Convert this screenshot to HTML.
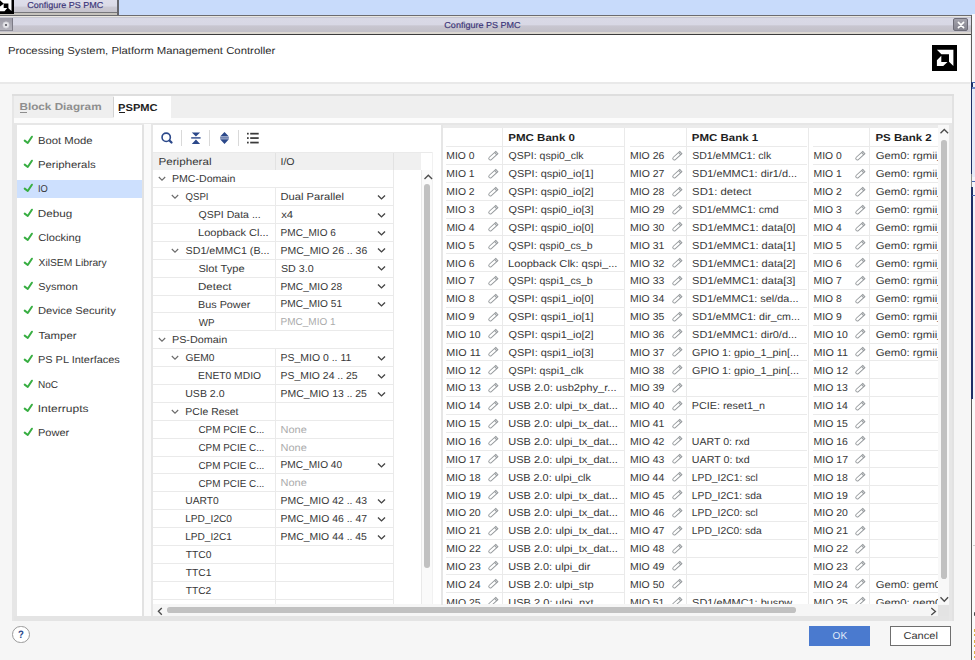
<!DOCTYPE html>
<html><head><meta charset="utf-8"><title>Configure PS PMC</title>
<style>
html,body{margin:0;padding:0;}
body{width:975px;height:660px;overflow:hidden;position:relative;background:#f6f6f6;font-family:"Liberation Sans",sans-serif;}
#r{position:absolute;left:0;top:0;width:975px;height:660px;overflow:hidden;}
#r div,#r svg,#r span{position:absolute;display:block;}
.t{left:0;line-height:20px;white-space:pre;transform-origin:0 0;text-rendering:geometricPrecision;font-family:"Liberation Sans",sans-serif;}
.clip{overflow:hidden;}
</style></head><body><div id="r">
<div style="left:0.00px;top:0.00px;width:975.00px;height:660.00px;background:#f6f6f6;"></div>
<div style="left:0.00px;top:0.00px;width:975.00px;height:14.90px;background:#c8dbfb;"></div>
<div style="left:972.30px;top:14.90px;width:2.70px;height:3.50px;background:#c8dbfb;"></div>
<div style="left:13.00px;top:0.00px;width:104.40px;height:12.10px;background:#dddde9;background:linear-gradient(#dedeea 0,#dadae6 50%,#cbc9d3 60%,#c6c4cc 100%);"></div>
<div style="left:0.00px;top:12.00px;width:117.40px;height:0.95px;background:#77777b;"></div>
<div style="left:0.00px;top:12.90px;width:117.40px;height:2.00px;background:#c6c3bd;"></div>
<div style="left:117.20px;top:0.00px;width:1.40px;height:14.90px;background:#66666c;"></div>
<div style="left:0.00px;top:0.00px;width:13.80px;height:13.50px;background:#000;"></div>
<svg style="left:0.00px;top:0.00px" width="14" height="14" viewBox="0 0 14 14"><path d="M0 0 H11.5 V11.1 L8.4 8.2 V3.4 H3.5 L0.2 0.4 Z" fill="#fff"/><path d="M0 6.5 L3.7 3.7 V8.1 H7.3 L4.5 11.2 H0 Z" fill="#fff"/></svg>
<div style="left:0.00px;top:14.90px;width:972.30px;height:1.00px;background:#6c6c70;"></div>
<div style="left:0.00px;top:15.90px;width:970.50px;height:1.50px;background:#e9e7e0;"></div>
<div style="left:0.00px;top:17.30px;width:970.50px;height:15.10px;background:#d8d8e4;background:linear-gradient(#b4b4be 0,#d6d6e3 6%,#d9d9e6 12%,#d8d8e5 50%,#c8c6d0 60%,#c2c0c8 100%);"></div>
<div style="left:0.00px;top:32.30px;width:970.50px;height:1.30px;background:#dcd8d2;"></div>
<div style="left:0.00px;top:33.60px;width:970.50px;height:1.30px;background:#3c3c3c;"></div>
<div style="left:0.00px;top:18.00px;width:12.80px;height:13.40px;background:#a9a8b2;background:linear-gradient(#9c9ba6,#b4b3bc);border-right:1px solid #7c7b86;border-bottom:1px solid #8c8b96;box-sizing:border-box;"></div>
<svg style="left:1.50px;top:20.60px" width="8" height="8" viewBox="0 0 8 8"><circle cx="4" cy="4" r="3.2" fill="#e6e6ea" stroke="#c8c8d0" stroke-width="0.6"/><circle cx="4" cy="4" r="1.1" fill="#55555f"/></svg>
<div style="left:953.20px;top:18.20px;width:15.00px;height:12.60px;background:#8e8d98;background:linear-gradient(#a3a2ac,#85848f);border:1px solid #6e6d78;border-radius:2px;box-sizing:border-box;"></div>
<svg style="left:956.70px;top:20.50px" width="8" height="8" viewBox="0 0 8 8"><path d="M1.4 1.4 L6.6 6.6 M6.6 1.4 L1.4 6.6" stroke="#fff" stroke-width="1.6" stroke-linecap="round"/></svg>
<div style="left:972.20px;top:14.40px;width:2.80px;height:645.60px;background:#f3f4f9;"></div>
<div style="left:972.20px;top:14.40px;width:2.80px;height:68.00px;background:#f7f7fb;"></div>
<div style="left:972.20px;top:400.00px;width:2.80px;height:260.00px;background:#fafafa;"></div>
<div style="left:970.50px;top:14.60px;width:1.80px;height:645.40px;background:#5c5c5c;"></div>
<div style="left:970.50px;top:82.00px;width:2.00px;height:92.40px;background:#1f2f66;"></div>
<div style="left:970.50px;top:187.30px;width:2.00px;height:211.30px;background:#1f2f66;"></div>
<div style="left:970.50px;top:174.40px;width:1.40px;height:12.90px;background:#8a8a8a;"></div>
<div style="left:972.00px;top:82.00px;width:3.00px;height:1.40px;background:#4a66b0;"></div>
<div style="left:972.40px;top:86.80px;width:2.60px;height:2.00px;background:#6f86c6;"></div>
<div style="left:972.40px;top:88.80px;width:2.60px;height:88.00px;background:#e6eaf7;"></div>
<div style="left:972.00px;top:181.00px;width:3.00px;height:1.30px;background:#4a66b0;"></div>
<div style="left:972.00px;top:194.60px;width:3.00px;height:1.30px;background:#4a66b0;"></div>
<div style="left:972.60px;top:545.00px;width:2.40px;height:1.00px;background:#cfcfcf;"></div>
<div style="left:973.50px;top:611.60px;width:1.50px;height:4.80px;background:#4a4a4a;border-radius:2px 0 0 2px;"></div>
<div style="left:973.50px;top:628.50px;width:1.50px;height:3.20px;background:#dcb044;"></div>
<div style="left:973.50px;top:634.00px;width:1.50px;height:2.40px;background:#dcb044;"></div>
<div style="left:973.50px;top:639.50px;width:1.50px;height:3.20px;background:#dcb044;"></div>
<div style="left:973.50px;top:645.00px;width:1.50px;height:2.40px;background:#dcb044;"></div>
<div style="left:973.50px;top:650.50px;width:1.50px;height:3.20px;background:#dcb044;"></div>
<div style="left:973.50px;top:656.00px;width:1.50px;height:2.40px;background:#dcb044;"></div>
<span class="t " style="top:-5px;font-size:8.62px;color:#40387a;transform:translateX(27.15px) scaleX(1.0472);-webkit-text-stroke:0.2px #40387a;">Configure PS PMC</span>
<span class="t " style="top:15px;font-size:8.62px;color:#40387a;transform:translateX(444.35px) scaleX(1.0472);-webkit-text-stroke:0.2px #40387a;">Configure PS PMC</span>
<div style="left:0.00px;top:34.90px;width:970.40px;height:47.80px;background:#fff;"></div>
<div style="left:0.00px;top:82.30px;width:970.40px;height:1.80px;background:#e9e9e9;"></div>
<span class="t " style="top:42px;font-size:10.05px;color:#2e2e2e;transform:translateX(7.99px) scaleX(1.1292);">Processing System, Platform Management Controller</span>
<div style="left:931.60px;top:45.40px;width:25.90px;height:26.10px;background:#000;"></div>
<svg style="left:931.60px;top:45.40px" width="26" height="26.2" viewBox="0 0 26 26.2"><path d="M4.9 4.7 H21.4 V21.1 L17 16.7 V9.2 H9.4 Z" fill="#fff"/><path d="M4.9 15.2 L9.3 10.8 V17 H15.5 L11.2 21.1 H4.9 Z" fill="#fff"/></svg>
<div style="left:12.30px;top:94.40px;width:941.60px;height:526.20px;background:#e4e4e4;"></div>
<div style="left:14.40px;top:96.30px;width:937.30px;height:22.20px;background:#efefef;"></div>
<div style="left:14.40px;top:118.40px;width:937.30px;height:4.60px;background:#fcfcfc;"></div>
<div style="left:113.60px;top:96.00px;width:57.20px;height:24.00px;background:#fff;"></div>
<div style="left:112.50px;top:97.40px;width:1.00px;height:19.20px;background:#d2d2d2;"></div>
<span class="t " style="top:98px;font-size:10.05px;color:#8e8e8e;font-weight:bold;transform:translateX(19.44px) scaleX(1.1675);">Block Diagram</span>
<div style="left:19.80px;top:112.20px;width:7.00px;height:1.00px;background:#8e8e8e;"></div>
<span class="t " style="top:99px;font-size:10.05px;color:#1e1e1e;font-weight:bold;transform:translateX(118.08px) scaleX(1.1054);">PSPMC</span>
<div style="left:118.60px;top:112.30px;width:6.60px;height:1.00px;background:#1e1e1e;"></div>
<div style="left:14.40px;top:123.00px;width:937.30px;height:495.40px;background:#e7e7e7;"></div>
<div style="left:17.00px;top:124.80px;width:125.20px;height:491.40px;background:#fff;"></div>
<div style="left:142.20px;top:124.80px;width:1.60px;height:491.40px;background:#e2e2e2;"></div>
<div style="left:143.80px;top:123.60px;width:7.60px;height:492.60px;background:#fafafa;"></div>
<div style="left:17.20px;top:179.70px;width:124.90px;height:18.40px;background:#cde0fe;"></div>
<span class="t " style="top:132px;font-size:10.05px;color:#383838;transform:translateX(37.89px) scaleX(1.1258);">Boot Mode</span>
<svg style="left:23.00px;top:133.50px" width="11" height="11" viewBox="0 0 11 11"><path d="M1.7 6.6 L4.75 9.0 L8.9 2.7" fill="none" stroke="#38ae42" stroke-width="2.0" stroke-linejoin="round" stroke-linecap="round"/></svg>
<span class="t " style="top:156px;font-size:10.05px;color:#383838;transform:translateX(37.89px) scaleX(1.1367);">Peripherals</span>
<svg style="left:23.00px;top:157.90px" width="11" height="11" viewBox="0 0 11 11"><path d="M1.7 6.6 L4.75 9.0 L8.9 2.7" fill="none" stroke="#38ae42" stroke-width="2.0" stroke-linejoin="round" stroke-linecap="round"/></svg>
<span class="t " style="top:180px;font-size:10.05px;color:#383838;transform:translateX(37.96px) scaleX(0.9299);">IO</span>
<svg style="left:23.00px;top:182.30px" width="11" height="11" viewBox="0 0 11 11"><path d="M1.7 6.6 L4.75 9.0 L8.9 2.7" fill="none" stroke="#38ae42" stroke-width="2.0" stroke-linejoin="round" stroke-linecap="round"/></svg>
<span class="t " style="top:205px;font-size:10.05px;color:#383838;transform:translateX(37.86px) scaleX(1.1654);">Debug</span>
<svg style="left:23.00px;top:206.70px" width="11" height="11" viewBox="0 0 11 11"><path d="M1.7 6.6 L4.75 9.0 L8.9 2.7" fill="none" stroke="#38ae42" stroke-width="2.0" stroke-linejoin="round" stroke-linecap="round"/></svg>
<span class="t " style="top:229px;font-size:10.05px;color:#383838;transform:translateX(38.24px) scaleX(1.1098);">Clocking</span>
<svg style="left:23.00px;top:231.10px" width="11" height="11" viewBox="0 0 11 11"><path d="M1.7 6.6 L4.75 9.0 L8.9 2.7" fill="none" stroke="#38ae42" stroke-width="2.0" stroke-linejoin="round" stroke-linecap="round"/></svg>
<span class="t " style="top:254px;font-size:10.05px;color:#383838;transform:translateX(38.54px) scaleX(1.0258);">XilSEM Library</span>
<svg style="left:23.00px;top:255.50px" width="11" height="11" viewBox="0 0 11 11"><path d="M1.7 6.6 L4.75 9.0 L8.9 2.7" fill="none" stroke="#38ae42" stroke-width="2.0" stroke-linejoin="round" stroke-linecap="round"/></svg>
<span class="t " style="top:278px;font-size:10.05px;color:#383838;transform:translateX(38.31px) scaleX(1.0858);">Sysmon</span>
<svg style="left:23.00px;top:279.90px" width="11" height="11" viewBox="0 0 11 11"><path d="M1.7 6.6 L4.75 9.0 L8.9 2.7" fill="none" stroke="#38ae42" stroke-width="2.0" stroke-linejoin="round" stroke-linecap="round"/></svg>
<span class="t " style="top:302px;font-size:10.05px;color:#383838;transform:translateX(37.90px) scaleX(1.1152);">Device Security</span>
<svg style="left:23.00px;top:304.30px" width="11" height="11" viewBox="0 0 11 11"><path d="M1.7 6.6 L4.75 9.0 L8.9 2.7" fill="none" stroke="#38ae42" stroke-width="2.0" stroke-linejoin="round" stroke-linecap="round"/></svg>
<span class="t " style="top:327px;font-size:10.05px;color:#383838;transform:translateX(38.57px) scaleX(1.1322);">Tamper</span>
<svg style="left:23.00px;top:328.70px" width="11" height="11" viewBox="0 0 11 11"><path d="M1.7 6.6 L4.75 9.0 L8.9 2.7" fill="none" stroke="#38ae42" stroke-width="2.0" stroke-linejoin="round" stroke-linecap="round"/></svg>
<span class="t " style="top:351px;font-size:10.05px;color:#383838;transform:translateX(37.92px) scaleX(1.0923);">PS PL Interfaces</span>
<svg style="left:23.00px;top:353.10px" width="11" height="11" viewBox="0 0 11 11"><path d="M1.7 6.6 L4.75 9.0 L8.9 2.7" fill="none" stroke="#38ae42" stroke-width="2.0" stroke-linejoin="round" stroke-linecap="round"/></svg>
<span class="t " style="top:376px;font-size:10.05px;color:#383838;transform:translateX(38.00px) scaleX(1.0001);">NoC</span>
<svg style="left:23.00px;top:377.50px" width="11" height="11" viewBox="0 0 11 11"><path d="M1.7 6.6 L4.75 9.0 L8.9 2.7" fill="none" stroke="#38ae42" stroke-width="2.0" stroke-linejoin="round" stroke-linecap="round"/></svg>
<span class="t " style="top:400px;font-size:10.05px;color:#383838;transform:translateX(37.72px) scaleX(1.1962);">Interrupts</span>
<svg style="left:23.00px;top:401.90px" width="11" height="11" viewBox="0 0 11 11"><path d="M1.7 6.6 L4.75 9.0 L8.9 2.7" fill="none" stroke="#38ae42" stroke-width="2.0" stroke-linejoin="round" stroke-linecap="round"/></svg>
<span class="t " style="top:424px;font-size:10.05px;color:#383838;transform:translateX(37.92px) scaleX(1.0985);">Power</span>
<svg style="left:23.00px;top:426.30px" width="11" height="11" viewBox="0 0 11 11"><path d="M1.7 6.6 L4.75 9.0 L8.9 2.7" fill="none" stroke="#38ae42" stroke-width="2.0" stroke-linejoin="round" stroke-linecap="round"/></svg>
<div style="left:151.40px;top:123.40px;width:797.40px;height:492.20px;background:#e6e6e6;"></div>
<div style="left:153.30px;top:124.90px;width:287.60px;height:479.80px;background:#fff;"></div>
<svg style="left:153.00px;top:125.00px" width="120" height="27" viewBox="153 125 120 27"><circle cx="166.2" cy="137.3" r="4.15" fill="none" stroke="#2b488a" stroke-width="1.6"/>
<path d="M169.7 140.7 L171.5 142.5" stroke="#2b488a" stroke-width="2.3" stroke-linecap="round"/>
<path d="M191.8 132.4 H200.1 L195.95 136.4 Z M191.8 143.9 H200.1 L195.95 139.5 Z" fill="#2b488a"/>
<rect x="191.2" y="137.2" width="9.4" height="1.4" fill="#2b488a"/>
<path d="M220.1 136.6 L224.5 132.0 L228.9 136.6 Z M220.1 139.3 L224.5 143.9 L228.9 139.3 Z" fill="#2b488a"/>
<rect x="220.1" y="137.35" width="8.8" height="1.2" fill="#2b488a"/>
<g fill="#3a3a3a"><rect x="247.0" y="132.8" width="1.7" height="1.75"/><rect x="250.2" y="132.8" width="8.5" height="1.75"/>
<rect x="247.0" y="137.2" width="1.7" height="1.75"/><rect x="250.2" y="137.2" width="8.5" height="1.75"/>
<rect x="247.0" y="141.7" width="1.7" height="1.75"/><rect x="250.2" y="141.7" width="8.5" height="1.75"/></g></svg>
<div style="left:181.30px;top:130.20px;width:0.90px;height:15.60px;background:#d9d9d9;"></div>
<div style="left:209.30px;top:130.20px;width:0.90px;height:15.60px;background:#d9d9d9;"></div>
<div style="left:238.20px;top:130.20px;width:0.90px;height:15.60px;background:#d9d9d9;"></div>
<div style="left:153.30px;top:151.80px;width:279.60px;height:1.00px;background:#eaeaea;"></div>
<div style="left:153.30px;top:152.60px;width:268.00px;height:17.80px;background:#f0f0f0;"></div>
<div style="left:274.60px;top:152.60px;width:1.00px;height:17.80px;background:#e2e2e2;"></div>
<div style="left:393.40px;top:152.60px;width:1.00px;height:17.80px;background:#e2e2e2;"></div>
<span class="t " style="top:153px;font-size:10.05px;color:#383838;transform:translateX(158.47px) scaleX(1.1595);">Peripheral</span>
<span class="t " style="top:153px;font-size:10.05px;color:#383838;transform:translateX(280.44px) scaleX(1.0584);">I/O</span>
<div style="left:153.30px;top:187.24px;width:240.60px;height:1.00px;background:#eaeaea;"></div>
<span class="t " style="top:170px;font-size:10.05px;color:#383838;transform:translateX(171.95px) scaleX(1.0534);">PMC-Domain</span>
<svg style="left:157.80px;top:176.25px" width="8" height="6" viewBox="0 0 8 6"><path d="M0.8 1 L4 4.2 L7.2 1" fill="none" stroke="#6a6a6a" stroke-width="1.1"/></svg>
<div style="left:153.30px;top:205.13px;width:240.60px;height:1.00px;background:#eaeaea;"></div>
<div style="left:274.60px;top:188.24px;width:1.00px;height:17.89px;background:#eaeaea;"></div>
<span class="t " style="top:188px;font-size:10.05px;color:#383838;transform:translateX(185.57px) scaleX(0.9546);">QSPI</span>
<svg style="left:170.70px;top:194.14px" width="8" height="6" viewBox="0 0 8 6"><path d="M0.8 1 L4 4.2 L7.2 1" fill="none" stroke="#6a6a6a" stroke-width="1.1"/></svg>
<span class="t " style="top:188px;font-size:10.05px;color:#383838;transform:translateX(280.50px) scaleX(1.1134);">Dual Parallel</span>
<svg style="left:377.20px;top:193.74px" width="9" height="7" viewBox="0 0 9 7"><path d="M1 1.4 L4.5 4.9 L8 1.4" fill="none" stroke="#444" stroke-width="1.35"/></svg>
<div style="left:153.30px;top:223.02px;width:240.60px;height:1.00px;background:#eaeaea;"></div>
<div style="left:274.60px;top:206.13px;width:1.00px;height:17.89px;background:#eaeaea;"></div>
<span class="t " style="top:206px;font-size:10.05px;color:#383838;transform:translateX(198.42px) scaleX(1.0526);">QSPI Data ...</span>
<span class="t " style="top:206px;font-size:10.05px;color:#383838;transform:translateX(281.23px) scaleX(1.1219);">x4</span>
<svg style="left:377.20px;top:211.63px" width="9" height="7" viewBox="0 0 9 7"><path d="M1 1.4 L4.5 4.9 L8 1.4" fill="none" stroke="#444" stroke-width="1.35"/></svg>
<div style="left:153.30px;top:240.91px;width:240.60px;height:1.00px;background:#eaeaea;"></div>
<div style="left:274.60px;top:224.02px;width:1.00px;height:17.89px;background:#eaeaea;"></div>
<span class="t " style="top:224px;font-size:10.05px;color:#383838;transform:translateX(198.02px) scaleX(1.0996);">Loopback Cl...</span>
<span class="t " style="top:224px;font-size:10.05px;color:#383838;transform:translateX(280.60px) scaleX(0.9988);">PMC_MIO 6</span>
<svg style="left:377.20px;top:229.52px" width="9" height="7" viewBox="0 0 9 7"><path d="M1 1.4 L4.5 4.9 L8 1.4" fill="none" stroke="#444" stroke-width="1.35"/></svg>
<div style="left:153.30px;top:258.80px;width:240.60px;height:1.00px;background:#eaeaea;"></div>
<div style="left:274.60px;top:241.91px;width:1.00px;height:17.89px;background:#eaeaea;"></div>
<span class="t " style="top:242px;font-size:10.05px;color:#383838;transform:translateX(185.52px) scaleX(1.0667);">SD1/eMMC1 (B...</span>
<svg style="left:170.70px;top:247.81px" width="8" height="6" viewBox="0 0 8 6"><path d="M0.8 1 L4 4.2 L7.2 1" fill="none" stroke="#6a6a6a" stroke-width="1.1"/></svg>
<span class="t " style="top:242px;font-size:10.05px;color:#383838;transform:translateX(280.56px) scaleX(1.0416);">PMC_MIO 26 .. 36</span>
<svg style="left:377.20px;top:247.41px" width="9" height="7" viewBox="0 0 9 7"><path d="M1 1.4 L4.5 4.9 L8 1.4" fill="none" stroke="#444" stroke-width="1.35"/></svg>
<div style="left:153.30px;top:276.69px;width:240.60px;height:1.00px;background:#eaeaea;"></div>
<div style="left:274.60px;top:259.80px;width:1.00px;height:17.89px;background:#eaeaea;"></div>
<span class="t " style="top:260px;font-size:10.05px;color:#383838;transform:translateX(198.40px) scaleX(1.1087);">Slot Type</span>
<span class="t " style="top:260px;font-size:10.05px;color:#383838;transform:translateX(280.92px) scaleX(1.0661);">SD 3.0</span>
<svg style="left:377.20px;top:265.30px" width="9" height="7" viewBox="0 0 9 7"><path d="M1 1.4 L4.5 4.9 L8 1.4" fill="none" stroke="#444" stroke-width="1.35"/></svg>
<div style="left:153.30px;top:294.58px;width:240.60px;height:1.00px;background:#eaeaea;"></div>
<div style="left:274.60px;top:277.69px;width:1.00px;height:17.89px;background:#eaeaea;"></div>
<span class="t " style="top:278px;font-size:10.05px;color:#383838;transform:translateX(197.97px) scaleX(1.1505);">Detect</span>
<span class="t " style="top:278px;font-size:10.05px;color:#383838;transform:translateX(280.59px) scaleX(1.0121);">PMC_MIO 28</span>
<svg style="left:377.20px;top:283.19px" width="9" height="7" viewBox="0 0 9 7"><path d="M1 1.4 L4.5 4.9 L8 1.4" fill="none" stroke="#444" stroke-width="1.35"/></svg>
<div style="left:153.30px;top:312.47px;width:240.60px;height:1.00px;background:#eaeaea;"></div>
<div style="left:274.60px;top:295.58px;width:1.00px;height:17.89px;background:#eaeaea;"></div>
<span class="t " style="top:296px;font-size:10.05px;color:#383838;transform:translateX(198.04px) scaleX(1.0751);">Bus Power</span>
<span class="t " style="top:295px;font-size:10.05px;color:#383838;transform:translateX(280.59px) scaleX(1.0096);">PMC_MIO 51</span>
<svg style="left:377.20px;top:301.08px" width="9" height="7" viewBox="0 0 9 7"><path d="M1 1.4 L4.5 4.9 L8 1.4" fill="none" stroke="#444" stroke-width="1.35"/></svg>
<div style="left:153.30px;top:330.36px;width:240.60px;height:1.00px;background:#eaeaea;"></div>
<div style="left:274.60px;top:313.47px;width:1.00px;height:17.89px;background:#eaeaea;"></div>
<span class="t " style="top:314px;font-size:10.05px;color:#383838;transform:translateX(198.85px) scaleX(0.9742);">WP</span>
<span class="t " style="top:313px;font-size:10.05px;color:#ababab;transform:translateX(280.60px) scaleX(0.9941);">PMC_MIO 1</span>
<div style="left:153.30px;top:348.25px;width:240.60px;height:1.00px;background:#eaeaea;"></div>
<span class="t " style="top:331px;font-size:10.05px;color:#383838;transform:translateX(171.93px) scaleX(1.0758);">PS-Domain</span>
<svg style="left:157.80px;top:337.26px" width="8" height="6" viewBox="0 0 8 6"><path d="M0.8 1 L4 4.2 L7.2 1" fill="none" stroke="#6a6a6a" stroke-width="1.1"/></svg>
<div style="left:153.30px;top:366.14px;width:240.60px;height:1.00px;background:#eaeaea;"></div>
<div style="left:274.60px;top:349.25px;width:1.00px;height:17.89px;background:#eaeaea;"></div>
<span class="t " style="top:349px;font-size:10.05px;color:#383838;transform:translateX(185.49px) scaleX(1.0187);">GEM0</span>
<svg style="left:170.70px;top:355.15px" width="8" height="6" viewBox="0 0 8 6"><path d="M0.8 1 L4 4.2 L7.2 1" fill="none" stroke="#6a6a6a" stroke-width="1.1"/></svg>
<span class="t " style="top:349px;font-size:10.05px;color:#383838;transform:translateX(280.56px) scaleX(1.0407);">PS_MIO 0 .. 11</span>
<svg style="left:377.20px;top:354.75px" width="9" height="7" viewBox="0 0 9 7"><path d="M1 1.4 L4.5 4.9 L8 1.4" fill="none" stroke="#444" stroke-width="1.35"/></svg>
<div style="left:153.30px;top:384.03px;width:240.60px;height:1.00px;background:#eaeaea;"></div>
<div style="left:274.60px;top:367.14px;width:1.00px;height:17.89px;background:#eaeaea;"></div>
<span class="t " style="top:367px;font-size:10.05px;color:#383838;transform:translateX(198.08px) scaleX(1.0246);">ENET0 MDIO</span>
<span class="t " style="top:367px;font-size:10.05px;color:#383838;transform:translateX(280.57px) scaleX(1.0375);">PS_MIO 24 .. 25</span>
<svg style="left:377.20px;top:372.64px" width="9" height="7" viewBox="0 0 9 7"><path d="M1 1.4 L4.5 4.9 L8 1.4" fill="none" stroke="#444" stroke-width="1.35"/></svg>
<div style="left:153.30px;top:401.92px;width:240.60px;height:1.00px;background:#eaeaea;"></div>
<div style="left:274.60px;top:385.03px;width:1.00px;height:17.89px;background:#eaeaea;"></div>
<span class="t " style="top:385px;font-size:10.05px;color:#383838;transform:translateX(185.21px) scaleX(1.0509);">USB 2.0</span>
<span class="t " style="top:385px;font-size:10.05px;color:#383838;transform:translateX(280.57px) scaleX(1.0379);">PMC_MIO 13 .. 25</span>
<svg style="left:377.20px;top:390.53px" width="9" height="7" viewBox="0 0 9 7"><path d="M1 1.4 L4.5 4.9 L8 1.4" fill="none" stroke="#444" stroke-width="1.35"/></svg>
<div style="left:153.30px;top:419.81px;width:240.60px;height:1.00px;background:#eaeaea;"></div>
<div style="left:274.60px;top:402.92px;width:1.00px;height:17.89px;background:#eaeaea;"></div>
<span class="t " style="top:403px;font-size:10.05px;color:#383838;transform:translateX(185.17px) scaleX(1.0382);">PCIe Reset</span>
<svg style="left:170.70px;top:408.82px" width="8" height="6" viewBox="0 0 8 6"><path d="M0.8 1 L4 4.2 L7.2 1" fill="none" stroke="#6a6a6a" stroke-width="1.1"/></svg>
<div style="left:153.30px;top:437.70px;width:240.60px;height:1.00px;background:#eaeaea;"></div>
<div style="left:274.60px;top:420.81px;width:1.00px;height:17.89px;background:#eaeaea;"></div>
<span class="t " style="top:421px;font-size:10.05px;color:#383838;transform:translateX(198.41px) scaleX(0.9847);">CPM PCIE C...</span>
<span class="t " style="top:421px;font-size:10.05px;color:#ababab;transform:translateX(280.52px) scaleX(1.0914);">None</span>
<div style="left:153.30px;top:455.59px;width:240.60px;height:1.00px;background:#eaeaea;"></div>
<div style="left:274.60px;top:438.70px;width:1.00px;height:17.89px;background:#eaeaea;"></div>
<span class="t " style="top:439px;font-size:10.05px;color:#383838;transform:translateX(198.41px) scaleX(0.9847);">CPM PCIE C...</span>
<span class="t " style="top:439px;font-size:10.05px;color:#ababab;transform:translateX(280.52px) scaleX(1.0914);">None</span>
<div style="left:153.30px;top:473.48px;width:240.60px;height:1.00px;background:#eaeaea;"></div>
<div style="left:274.60px;top:456.59px;width:1.00px;height:17.89px;background:#eaeaea;"></div>
<span class="t " style="top:457px;font-size:10.05px;color:#383838;transform:translateX(198.41px) scaleX(0.9847);">CPM PCIE C...</span>
<span class="t " style="top:456px;font-size:10.05px;color:#383838;transform:translateX(280.59px) scaleX(1.0121);">PMC_MIO 40</span>
<svg style="left:377.20px;top:462.09px" width="9" height="7" viewBox="0 0 9 7"><path d="M1 1.4 L4.5 4.9 L8 1.4" fill="none" stroke="#444" stroke-width="1.35"/></svg>
<div style="left:153.30px;top:491.37px;width:240.60px;height:1.00px;background:#eaeaea;"></div>
<div style="left:274.60px;top:474.48px;width:1.00px;height:17.89px;background:#eaeaea;"></div>
<span class="t " style="top:475px;font-size:10.05px;color:#383838;transform:translateX(198.41px) scaleX(0.9847);">CPM PCIE C...</span>
<span class="t " style="top:474px;font-size:10.05px;color:#ababab;transform:translateX(280.52px) scaleX(1.0914);">None</span>
<div style="left:153.30px;top:509.26px;width:240.60px;height:1.00px;background:#eaeaea;"></div>
<div style="left:274.60px;top:492.37px;width:1.00px;height:17.89px;background:#eaeaea;"></div>
<span class="t " style="top:492px;font-size:10.05px;color:#383838;transform:translateX(185.23px) scaleX(1.0196);">UART0</span>
<span class="t " style="top:492px;font-size:10.05px;color:#383838;transform:translateX(280.56px) scaleX(1.0391);">PMC_MIO 42 .. 43</span>
<svg style="left:377.20px;top:497.87px" width="9" height="7" viewBox="0 0 9 7"><path d="M1 1.4 L4.5 4.9 L8 1.4" fill="none" stroke="#444" stroke-width="1.35"/></svg>
<div style="left:153.30px;top:527.15px;width:240.60px;height:1.00px;background:#eaeaea;"></div>
<div style="left:274.60px;top:510.26px;width:1.00px;height:17.89px;background:#eaeaea;"></div>
<span class="t " style="top:510px;font-size:10.05px;color:#383838;transform:translateX(185.19px) scaleX(1.0098);">LPD_I2C0</span>
<span class="t " style="top:510px;font-size:10.05px;color:#383838;transform:translateX(280.56px) scaleX(1.0391);">PMC_MIO 46 .. 47</span>
<svg style="left:377.20px;top:515.76px" width="9" height="7" viewBox="0 0 9 7"><path d="M1 1.4 L4.5 4.9 L8 1.4" fill="none" stroke="#444" stroke-width="1.35"/></svg>
<div style="left:153.30px;top:545.04px;width:240.60px;height:1.00px;background:#eaeaea;"></div>
<div style="left:274.60px;top:528.15px;width:1.00px;height:17.89px;background:#eaeaea;"></div>
<span class="t " style="top:528px;font-size:10.05px;color:#383838;transform:translateX(185.19px) scaleX(1.0065);">LPD_I2C1</span>
<span class="t " style="top:528px;font-size:10.05px;color:#383838;transform:translateX(280.57px) scaleX(1.0379);">PMC_MIO 44 .. 45</span>
<svg style="left:377.20px;top:533.65px" width="9" height="7" viewBox="0 0 9 7"><path d="M1 1.4 L4.5 4.9 L8 1.4" fill="none" stroke="#444" stroke-width="1.35"/></svg>
<div style="left:153.30px;top:562.93px;width:240.60px;height:1.00px;background:#eaeaea;"></div>
<div style="left:274.60px;top:546.04px;width:1.00px;height:17.89px;background:#eaeaea;"></div>
<span class="t " style="top:546px;font-size:10.05px;color:#383838;transform:translateX(185.79px) scaleX(1.0252);">TTC0</span>
<div style="left:153.30px;top:580.82px;width:240.60px;height:1.00px;background:#eaeaea;"></div>
<div style="left:274.60px;top:563.93px;width:1.00px;height:17.89px;background:#eaeaea;"></div>
<span class="t " style="top:564px;font-size:10.05px;color:#383838;transform:translateX(185.80px) scaleX(1.0191);">TTC1</span>
<div style="left:153.30px;top:598.71px;width:240.60px;height:1.00px;background:#eaeaea;"></div>
<div style="left:274.60px;top:581.82px;width:1.00px;height:17.89px;background:#eaeaea;"></div>
<span class="t " style="top:582px;font-size:10.05px;color:#383838;transform:translateX(185.80px) scaleX(1.0150);">TTC2</span>
<div style="left:274.60px;top:599.21px;width:1.00px;height:5.40px;background:#eaeaea;"></div>
<div style="left:393.40px;top:170.40px;width:1.00px;height:434.30px;background:#eaeaea;"></div>
<div style="left:421.40px;top:170.40px;width:11.40px;height:434.30px;background:#fafafa;"></div>
<div style="left:421.20px;top:170.40px;width:0.80px;height:434.30px;background:#e9e9e9;"></div>
<div style="left:432.40px;top:152.00px;width:0.80px;height:452.70px;background:#f1f1f1;"></div>
<svg style="left:423.90px;top:174.00px" width="9" height="7" viewBox="0 0 9 7"><path d="M0.5 5.0 L4.3 1.3 L8.1 5.0" fill="none" stroke="#4c4c4c" stroke-width="1.35"/></svg>
<div style="left:424.00px;top:184.40px;width:6.00px;height:384.00px;background:#c1c1c1;border-radius:3px;"></div>
<div style="left:443.30px;top:127.60px;width:495.00px;height:477.10px;background:#fff;"></div>
<div class="clip" style="left:443px;top:127px;width:495.3px;height:477.3px">
<div style="left:3.00px;top:19.25px;width:177.80px;height:1.00px;background:#eaeaea;"></div>
<div style="left:3.00px;top:37.09px;width:177.80px;height:1.00px;background:#eaeaea;"></div>
<div style="left:3.00px;top:54.94px;width:177.80px;height:1.00px;background:#eaeaea;"></div>
<div style="left:3.00px;top:72.78px;width:177.80px;height:1.00px;background:#eaeaea;"></div>
<div style="left:3.00px;top:90.62px;width:177.80px;height:1.00px;background:#eaeaea;"></div>
<div style="left:3.00px;top:108.47px;width:177.80px;height:1.00px;background:#eaeaea;"></div>
<div style="left:3.00px;top:126.31px;width:177.80px;height:1.00px;background:#eaeaea;"></div>
<div style="left:3.00px;top:144.15px;width:177.80px;height:1.00px;background:#eaeaea;"></div>
<div style="left:3.00px;top:161.99px;width:177.80px;height:1.00px;background:#eaeaea;"></div>
<div style="left:3.00px;top:179.84px;width:177.80px;height:1.00px;background:#eaeaea;"></div>
<div style="left:3.00px;top:197.68px;width:177.80px;height:1.00px;background:#eaeaea;"></div>
<div style="left:3.00px;top:215.52px;width:177.80px;height:1.00px;background:#eaeaea;"></div>
<div style="left:3.00px;top:233.37px;width:177.80px;height:1.00px;background:#eaeaea;"></div>
<div style="left:3.00px;top:251.21px;width:177.80px;height:1.00px;background:#eaeaea;"></div>
<div style="left:3.00px;top:269.05px;width:177.80px;height:1.00px;background:#eaeaea;"></div>
<div style="left:3.00px;top:286.89px;width:177.80px;height:1.00px;background:#eaeaea;"></div>
<div style="left:3.00px;top:304.74px;width:177.80px;height:1.00px;background:#eaeaea;"></div>
<div style="left:3.00px;top:322.58px;width:177.80px;height:1.00px;background:#eaeaea;"></div>
<div style="left:3.00px;top:340.42px;width:177.80px;height:1.00px;background:#eaeaea;"></div>
<div style="left:3.00px;top:358.27px;width:177.80px;height:1.00px;background:#eaeaea;"></div>
<div style="left:3.00px;top:376.11px;width:177.80px;height:1.00px;background:#eaeaea;"></div>
<div style="left:3.00px;top:393.95px;width:177.80px;height:1.00px;background:#eaeaea;"></div>
<div style="left:3.00px;top:411.80px;width:177.80px;height:1.00px;background:#eaeaea;"></div>
<div style="left:3.00px;top:429.64px;width:177.80px;height:1.00px;background:#eaeaea;"></div>
<div style="left:3.00px;top:447.48px;width:177.80px;height:1.00px;background:#eaeaea;"></div>
<div style="left:3.00px;top:465.33px;width:177.80px;height:1.00px;background:#eaeaea;"></div>
<div style="left:3.00px;top:483.17px;width:177.80px;height:1.00px;background:#eaeaea;"></div>
<div style="left:59.20px;top:0.60px;width:1.00px;height:480.00px;background:#eaeaea;"></div>
<div style="left:181.40px;top:0.60px;width:1.00px;height:480.00px;background:#eaeaea;"></div>
<div style="left:186.60px;top:19.25px;width:177.80px;height:1.00px;background:#eaeaea;"></div>
<div style="left:186.60px;top:37.09px;width:177.80px;height:1.00px;background:#eaeaea;"></div>
<div style="left:186.60px;top:54.94px;width:177.80px;height:1.00px;background:#eaeaea;"></div>
<div style="left:186.60px;top:72.78px;width:177.80px;height:1.00px;background:#eaeaea;"></div>
<div style="left:186.60px;top:90.62px;width:177.80px;height:1.00px;background:#eaeaea;"></div>
<div style="left:186.60px;top:108.47px;width:177.80px;height:1.00px;background:#eaeaea;"></div>
<div style="left:186.60px;top:126.31px;width:177.80px;height:1.00px;background:#eaeaea;"></div>
<div style="left:186.60px;top:144.15px;width:177.80px;height:1.00px;background:#eaeaea;"></div>
<div style="left:186.60px;top:161.99px;width:177.80px;height:1.00px;background:#eaeaea;"></div>
<div style="left:186.60px;top:179.84px;width:177.80px;height:1.00px;background:#eaeaea;"></div>
<div style="left:186.60px;top:197.68px;width:177.80px;height:1.00px;background:#eaeaea;"></div>
<div style="left:186.60px;top:215.52px;width:177.80px;height:1.00px;background:#eaeaea;"></div>
<div style="left:186.60px;top:233.37px;width:177.80px;height:1.00px;background:#eaeaea;"></div>
<div style="left:186.60px;top:251.21px;width:177.80px;height:1.00px;background:#eaeaea;"></div>
<div style="left:186.60px;top:269.05px;width:177.80px;height:1.00px;background:#eaeaea;"></div>
<div style="left:186.60px;top:286.89px;width:177.80px;height:1.00px;background:#eaeaea;"></div>
<div style="left:186.60px;top:304.74px;width:177.80px;height:1.00px;background:#eaeaea;"></div>
<div style="left:186.60px;top:322.58px;width:177.80px;height:1.00px;background:#eaeaea;"></div>
<div style="left:186.60px;top:340.42px;width:177.80px;height:1.00px;background:#eaeaea;"></div>
<div style="left:186.60px;top:358.27px;width:177.80px;height:1.00px;background:#eaeaea;"></div>
<div style="left:186.60px;top:376.11px;width:177.80px;height:1.00px;background:#eaeaea;"></div>
<div style="left:186.60px;top:393.95px;width:177.80px;height:1.00px;background:#eaeaea;"></div>
<div style="left:186.60px;top:411.80px;width:177.80px;height:1.00px;background:#eaeaea;"></div>
<div style="left:186.60px;top:429.64px;width:177.80px;height:1.00px;background:#eaeaea;"></div>
<div style="left:186.60px;top:447.48px;width:177.80px;height:1.00px;background:#eaeaea;"></div>
<div style="left:186.60px;top:465.33px;width:177.80px;height:1.00px;background:#eaeaea;"></div>
<div style="left:186.60px;top:483.17px;width:177.80px;height:1.00px;background:#eaeaea;"></div>
<div style="left:242.80px;top:0.60px;width:1.00px;height:480.00px;background:#eaeaea;"></div>
<div style="left:365.00px;top:0.60px;width:1.00px;height:480.00px;background:#eaeaea;"></div>
<div style="left:370.20px;top:19.25px;width:177.80px;height:1.00px;background:#eaeaea;"></div>
<div style="left:370.20px;top:37.09px;width:177.80px;height:1.00px;background:#eaeaea;"></div>
<div style="left:370.20px;top:54.94px;width:177.80px;height:1.00px;background:#eaeaea;"></div>
<div style="left:370.20px;top:72.78px;width:177.80px;height:1.00px;background:#eaeaea;"></div>
<div style="left:370.20px;top:90.62px;width:177.80px;height:1.00px;background:#eaeaea;"></div>
<div style="left:370.20px;top:108.47px;width:177.80px;height:1.00px;background:#eaeaea;"></div>
<div style="left:370.20px;top:126.31px;width:177.80px;height:1.00px;background:#eaeaea;"></div>
<div style="left:370.20px;top:144.15px;width:177.80px;height:1.00px;background:#eaeaea;"></div>
<div style="left:370.20px;top:161.99px;width:177.80px;height:1.00px;background:#eaeaea;"></div>
<div style="left:370.20px;top:179.84px;width:177.80px;height:1.00px;background:#eaeaea;"></div>
<div style="left:370.20px;top:197.68px;width:177.80px;height:1.00px;background:#eaeaea;"></div>
<div style="left:370.20px;top:215.52px;width:177.80px;height:1.00px;background:#eaeaea;"></div>
<div style="left:370.20px;top:233.37px;width:177.80px;height:1.00px;background:#eaeaea;"></div>
<div style="left:370.20px;top:251.21px;width:177.80px;height:1.00px;background:#eaeaea;"></div>
<div style="left:370.20px;top:269.05px;width:177.80px;height:1.00px;background:#eaeaea;"></div>
<div style="left:370.20px;top:286.89px;width:177.80px;height:1.00px;background:#eaeaea;"></div>
<div style="left:370.20px;top:304.74px;width:177.80px;height:1.00px;background:#eaeaea;"></div>
<div style="left:370.20px;top:322.58px;width:177.80px;height:1.00px;background:#eaeaea;"></div>
<div style="left:370.20px;top:340.42px;width:177.80px;height:1.00px;background:#eaeaea;"></div>
<div style="left:370.20px;top:358.27px;width:177.80px;height:1.00px;background:#eaeaea;"></div>
<div style="left:370.20px;top:376.11px;width:177.80px;height:1.00px;background:#eaeaea;"></div>
<div style="left:370.20px;top:393.95px;width:177.80px;height:1.00px;background:#eaeaea;"></div>
<div style="left:370.20px;top:411.80px;width:177.80px;height:1.00px;background:#eaeaea;"></div>
<div style="left:370.20px;top:429.64px;width:177.80px;height:1.00px;background:#eaeaea;"></div>
<div style="left:370.20px;top:447.48px;width:177.80px;height:1.00px;background:#eaeaea;"></div>
<div style="left:370.20px;top:465.33px;width:177.80px;height:1.00px;background:#eaeaea;"></div>
<div style="left:370.20px;top:483.17px;width:177.80px;height:1.00px;background:#eaeaea;"></div>
<div style="left:426.40px;top:0.60px;width:1.00px;height:480.00px;background:#eaeaea;"></div>
<div style="left:548.60px;top:0.60px;width:1.00px;height:480.00px;background:#eaeaea;"></div>
<span class="t " style="top:2px;font-size:10.05px;color:#1e1e1e;font-weight:bold;transform:translateX(65.25px) scaleX(1.1484);">PMC Bank 0</span>
<span class="t " style="top:20px;font-size:10.05px;color:#383838;transform:translateX(3.37px) scaleX(1.0293);">MIO 0</span>
<svg style="left:43.10px;top:22.00px" width="14" height="14" viewBox="-7 -7 14 14"><g transform="rotate(-42)" fill="none" stroke="#969a9d" stroke-width="0.95"><path d="M3.5 -1.55 H5.2 V1.55 H3.5 Z" fill="#dcdee0" stroke="none"/><path d="M5.2 -1.55 L-3.6 -1.55 A1.55 1.55 0 0 0 -3.6 1.55 L5.2 1.55 Z M3.5 -1.55 V1.55"/></g></svg>
<span class="t " style="top:20px;font-size:10.05px;color:#383838;transform:translateX(65.52px) scaleX(1.0511);">QSPI: qspi0_clk</span>
<span class="t " style="top:38px;font-size:10.05px;color:#383838;transform:translateX(3.37px) scaleX(1.0332);">MIO 1</span>
<svg style="left:43.10px;top:39.84px" width="14" height="14" viewBox="-7 -7 14 14"><g transform="rotate(-42)" fill="none" stroke="#969a9d" stroke-width="0.95"><path d="M3.5 -1.55 H5.2 V1.55 H3.5 Z" fill="#dcdee0" stroke="none"/><path d="M5.2 -1.55 L-3.6 -1.55 A1.55 1.55 0 0 0 -3.6 1.55 L5.2 1.55 Z M3.5 -1.55 V1.55"/></g></svg>
<span class="t " style="top:38px;font-size:10.05px;color:#383838;transform:translateX(65.51px) scaleX(1.0889);">QSPI: qspi0_io[1]</span>
<span class="t " style="top:56px;font-size:10.05px;color:#383838;transform:translateX(3.37px) scaleX(1.0332);">MIO 2</span>
<svg style="left:43.10px;top:57.69px" width="14" height="14" viewBox="-7 -7 14 14"><g transform="rotate(-42)" fill="none" stroke="#969a9d" stroke-width="0.95"><path d="M3.5 -1.55 H5.2 V1.55 H3.5 Z" fill="#dcdee0" stroke="none"/><path d="M5.2 -1.55 L-3.6 -1.55 A1.55 1.55 0 0 0 -3.6 1.55 L5.2 1.55 Z M3.5 -1.55 V1.55"/></g></svg>
<span class="t " style="top:56px;font-size:10.05px;color:#383838;transform:translateX(65.51px) scaleX(1.0889);">QSPI: qspi0_io[2]</span>
<span class="t " style="top:74px;font-size:10.05px;color:#383838;transform:translateX(3.37px) scaleX(1.0312);">MIO 3</span>
<svg style="left:43.10px;top:75.53px" width="14" height="14" viewBox="-7 -7 14 14"><g transform="rotate(-42)" fill="none" stroke="#969a9d" stroke-width="0.95"><path d="M3.5 -1.55 H5.2 V1.55 H3.5 Z" fill="#dcdee0" stroke="none"/><path d="M5.2 -1.55 L-3.6 -1.55 A1.55 1.55 0 0 0 -3.6 1.55 L5.2 1.55 Z M3.5 -1.55 V1.55"/></g></svg>
<span class="t " style="top:74px;font-size:10.05px;color:#383838;transform:translateX(65.51px) scaleX(1.0889);">QSPI: qspi0_io[3]</span>
<span class="t " style="top:92px;font-size:10.05px;color:#383838;transform:translateX(3.38px) scaleX(1.0253);">MIO 4</span>
<svg style="left:43.10px;top:93.37px" width="14" height="14" viewBox="-7 -7 14 14"><g transform="rotate(-42)" fill="none" stroke="#969a9d" stroke-width="0.95"><path d="M3.5 -1.55 H5.2 V1.55 H3.5 Z" fill="#dcdee0" stroke="none"/><path d="M5.2 -1.55 L-3.6 -1.55 A1.55 1.55 0 0 0 -3.6 1.55 L5.2 1.55 Z M3.5 -1.55 V1.55"/></g></svg>
<span class="t " style="top:92px;font-size:10.05px;color:#383838;transform:translateX(65.51px) scaleX(1.0889);">QSPI: qspi0_io[0]</span>
<span class="t " style="top:110px;font-size:10.05px;color:#383838;transform:translateX(3.37px) scaleX(1.0293);">MIO 5</span>
<svg style="left:43.10px;top:111.22px" width="14" height="14" viewBox="-7 -7 14 14"><g transform="rotate(-42)" fill="none" stroke="#969a9d" stroke-width="0.95"><path d="M3.5 -1.55 H5.2 V1.55 H3.5 Z" fill="#dcdee0" stroke="none"/><path d="M5.2 -1.55 L-3.6 -1.55 A1.55 1.55 0 0 0 -3.6 1.55 L5.2 1.55 Z M3.5 -1.55 V1.55"/></g></svg>
<span class="t " style="top:110px;font-size:10.05px;color:#383838;transform:translateX(65.53px) scaleX(1.0463);">QSPI: qspi0_cs_b</span>
<span class="t " style="top:128px;font-size:10.05px;color:#383838;transform:translateX(3.37px) scaleX(1.0312);">MIO 6</span>
<svg style="left:43.10px;top:129.06px" width="14" height="14" viewBox="-7 -7 14 14"><g transform="rotate(-42)" fill="none" stroke="#969a9d" stroke-width="0.95"><path d="M3.5 -1.55 H5.2 V1.55 H3.5 Z" fill="#dcdee0" stroke="none"/><path d="M5.2 -1.55 L-3.6 -1.55 A1.55 1.55 0 0 0 -3.6 1.55 L5.2 1.55 Z M3.5 -1.55 V1.55"/></g></svg>
<span class="t " style="top:128px;font-size:10.05px;color:#383838;transform:translateX(65.11px) scaleX(1.1055);">Loopback Clk: qspi_...</span>
<span class="t " style="top:145px;font-size:10.05px;color:#383838;transform:translateX(3.37px) scaleX(1.0332);">MIO 7</span>
<svg style="left:43.10px;top:146.90px" width="14" height="14" viewBox="-7 -7 14 14"><g transform="rotate(-42)" fill="none" stroke="#969a9d" stroke-width="0.95"><path d="M3.5 -1.55 H5.2 V1.55 H3.5 Z" fill="#dcdee0" stroke="none"/><path d="M5.2 -1.55 L-3.6 -1.55 A1.55 1.55 0 0 0 -3.6 1.55 L5.2 1.55 Z M3.5 -1.55 V1.55"/></g></svg>
<span class="t " style="top:145px;font-size:10.05px;color:#383838;transform:translateX(65.53px) scaleX(1.0463);">QSPI: qspi1_cs_b</span>
<span class="t " style="top:163px;font-size:10.05px;color:#383838;transform:translateX(3.37px) scaleX(1.0293);">MIO 8</span>
<svg style="left:43.10px;top:164.74px" width="14" height="14" viewBox="-7 -7 14 14"><g transform="rotate(-42)" fill="none" stroke="#969a9d" stroke-width="0.95"><path d="M3.5 -1.55 H5.2 V1.55 H3.5 Z" fill="#dcdee0" stroke="none"/><path d="M5.2 -1.55 L-3.6 -1.55 A1.55 1.55 0 0 0 -3.6 1.55 L5.2 1.55 Z M3.5 -1.55 V1.55"/></g></svg>
<span class="t " style="top:163px;font-size:10.05px;color:#383838;transform:translateX(65.51px) scaleX(1.0889);">QSPI: qspi1_io[0]</span>
<span class="t " style="top:181px;font-size:10.05px;color:#383838;transform:translateX(3.37px) scaleX(1.0312);">MIO 9</span>
<svg style="left:43.10px;top:182.59px" width="14" height="14" viewBox="-7 -7 14 14"><g transform="rotate(-42)" fill="none" stroke="#969a9d" stroke-width="0.95"><path d="M3.5 -1.55 H5.2 V1.55 H3.5 Z" fill="#dcdee0" stroke="none"/><path d="M5.2 -1.55 L-3.6 -1.55 A1.55 1.55 0 0 0 -3.6 1.55 L5.2 1.55 Z M3.5 -1.55 V1.55"/></g></svg>
<span class="t " style="top:181px;font-size:10.05px;color:#383838;transform:translateX(65.51px) scaleX(1.0889);">QSPI: qspi1_io[1]</span>
<span class="t " style="top:199px;font-size:10.05px;color:#383838;transform:translateX(3.36px) scaleX(1.0420);">MIO 10</span>
<svg style="left:43.10px;top:200.43px" width="14" height="14" viewBox="-7 -7 14 14"><g transform="rotate(-42)" fill="none" stroke="#969a9d" stroke-width="0.95"><path d="M3.5 -1.55 H5.2 V1.55 H3.5 Z" fill="#dcdee0" stroke="none"/><path d="M5.2 -1.55 L-3.6 -1.55 A1.55 1.55 0 0 0 -3.6 1.55 L5.2 1.55 Z M3.5 -1.55 V1.55"/></g></svg>
<span class="t " style="top:199px;font-size:10.05px;color:#383838;transform:translateX(65.51px) scaleX(1.0889);">QSPI: qspi1_io[2]</span>
<span class="t " style="top:217px;font-size:10.05px;color:#383838;transform:translateX(3.34px) scaleX(1.0709);">MIO 11</span>
<svg style="left:43.10px;top:218.27px" width="14" height="14" viewBox="-7 -7 14 14"><g transform="rotate(-42)" fill="none" stroke="#969a9d" stroke-width="0.95"><path d="M3.5 -1.55 H5.2 V1.55 H3.5 Z" fill="#dcdee0" stroke="none"/><path d="M5.2 -1.55 L-3.6 -1.55 A1.55 1.55 0 0 0 -3.6 1.55 L5.2 1.55 Z M3.5 -1.55 V1.55"/></g></svg>
<span class="t " style="top:217px;font-size:10.05px;color:#383838;transform:translateX(65.51px) scaleX(1.0889);">QSPI: qspi1_io[3]</span>
<span class="t " style="top:235px;font-size:10.05px;color:#383838;transform:translateX(3.36px) scaleX(1.0454);">MIO 12</span>
<svg style="left:43.10px;top:236.12px" width="14" height="14" viewBox="-7 -7 14 14"><g transform="rotate(-42)" fill="none" stroke="#969a9d" stroke-width="0.95"><path d="M3.5 -1.55 H5.2 V1.55 H3.5 Z" fill="#dcdee0" stroke="none"/><path d="M5.2 -1.55 L-3.6 -1.55 A1.55 1.55 0 0 0 -3.6 1.55 L5.2 1.55 Z M3.5 -1.55 V1.55"/></g></svg>
<span class="t " style="top:235px;font-size:10.05px;color:#383838;transform:translateX(65.52px) scaleX(1.0511);">QSPI: qspi1_clk</span>
<span class="t " style="top:252px;font-size:10.05px;color:#383838;transform:translateX(3.36px) scaleX(1.0437);">MIO 13</span>
<svg style="left:43.10px;top:253.96px" width="14" height="14" viewBox="-7 -7 14 14"><g transform="rotate(-42)" fill="none" stroke="#969a9d" stroke-width="0.95"><path d="M3.5 -1.55 H5.2 V1.55 H3.5 Z" fill="#dcdee0" stroke="none"/><path d="M5.2 -1.55 L-3.6 -1.55 A1.55 1.55 0 0 0 -3.6 1.55 L5.2 1.55 Z M3.5 -1.55 V1.55"/></g></svg>
<span class="t " style="top:252px;font-size:10.05px;color:#383838;transform:translateX(65.16px) scaleX(1.1093);">USB 2.0: usb2phy_r...</span>
<span class="t " style="top:270px;font-size:10.05px;color:#383838;transform:translateX(3.36px) scaleX(1.0388);">MIO 14</span>
<svg style="left:43.10px;top:271.80px" width="14" height="14" viewBox="-7 -7 14 14"><g transform="rotate(-42)" fill="none" stroke="#969a9d" stroke-width="0.95"><path d="M3.5 -1.55 H5.2 V1.55 H3.5 Z" fill="#dcdee0" stroke="none"/><path d="M5.2 -1.55 L-3.6 -1.55 A1.55 1.55 0 0 0 -3.6 1.55 L5.2 1.55 Z M3.5 -1.55 V1.55"/></g></svg>
<span class="t " style="top:270px;font-size:10.05px;color:#383838;transform:translateX(65.17px) scaleX(1.0980);">USB 2.0: ulpi_tx_dat...</span>
<span class="t " style="top:288px;font-size:10.05px;color:#383838;transform:translateX(3.36px) scaleX(1.0420);">MIO 15</span>
<svg style="left:43.10px;top:289.64px" width="14" height="14" viewBox="-7 -7 14 14"><g transform="rotate(-42)" fill="none" stroke="#969a9d" stroke-width="0.95"><path d="M3.5 -1.55 H5.2 V1.55 H3.5 Z" fill="#dcdee0" stroke="none"/><path d="M5.2 -1.55 L-3.6 -1.55 A1.55 1.55 0 0 0 -3.6 1.55 L5.2 1.55 Z M3.5 -1.55 V1.55"/></g></svg>
<span class="t " style="top:288px;font-size:10.05px;color:#383838;transform:translateX(65.17px) scaleX(1.0980);">USB 2.0: ulpi_tx_dat...</span>
<span class="t " style="top:306px;font-size:10.05px;color:#383838;transform:translateX(3.36px) scaleX(1.0437);">MIO 16</span>
<svg style="left:43.10px;top:307.49px" width="14" height="14" viewBox="-7 -7 14 14"><g transform="rotate(-42)" fill="none" stroke="#969a9d" stroke-width="0.95"><path d="M3.5 -1.55 H5.2 V1.55 H3.5 Z" fill="#dcdee0" stroke="none"/><path d="M5.2 -1.55 L-3.6 -1.55 A1.55 1.55 0 0 0 -3.6 1.55 L5.2 1.55 Z M3.5 -1.55 V1.55"/></g></svg>
<span class="t " style="top:306px;font-size:10.05px;color:#383838;transform:translateX(65.17px) scaleX(1.0980);">USB 2.0: ulpi_tx_dat...</span>
<span class="t " style="top:324px;font-size:10.05px;color:#383838;transform:translateX(3.36px) scaleX(1.0454);">MIO 17</span>
<svg style="left:43.10px;top:325.33px" width="14" height="14" viewBox="-7 -7 14 14"><g transform="rotate(-42)" fill="none" stroke="#969a9d" stroke-width="0.95"><path d="M3.5 -1.55 H5.2 V1.55 H3.5 Z" fill="#dcdee0" stroke="none"/><path d="M5.2 -1.55 L-3.6 -1.55 A1.55 1.55 0 0 0 -3.6 1.55 L5.2 1.55 Z M3.5 -1.55 V1.55"/></g></svg>
<span class="t " style="top:324px;font-size:10.05px;color:#383838;transform:translateX(65.17px) scaleX(1.0980);">USB 2.0: ulpi_tx_dat...</span>
<span class="t " style="top:342px;font-size:10.05px;color:#383838;transform:translateX(3.36px) scaleX(1.0420);">MIO 18</span>
<svg style="left:43.10px;top:343.17px" width="14" height="14" viewBox="-7 -7 14 14"><g transform="rotate(-42)" fill="none" stroke="#969a9d" stroke-width="0.95"><path d="M3.5 -1.55 H5.2 V1.55 H3.5 Z" fill="#dcdee0" stroke="none"/><path d="M5.2 -1.55 L-3.6 -1.55 A1.55 1.55 0 0 0 -3.6 1.55 L5.2 1.55 Z M3.5 -1.55 V1.55"/></g></svg>
<span class="t " style="top:342px;font-size:10.05px;color:#383838;transform:translateX(65.18px) scaleX(1.0819);">USB 2.0: ulpi_clk</span>
<span class="t " style="top:360px;font-size:10.05px;color:#383838;transform:translateX(3.36px) scaleX(1.0437);">MIO 19</span>
<svg style="left:43.10px;top:361.02px" width="14" height="14" viewBox="-7 -7 14 14"><g transform="rotate(-42)" fill="none" stroke="#969a9d" stroke-width="0.95"><path d="M3.5 -1.55 H5.2 V1.55 H3.5 Z" fill="#dcdee0" stroke="none"/><path d="M5.2 -1.55 L-3.6 -1.55 A1.55 1.55 0 0 0 -3.6 1.55 L5.2 1.55 Z M3.5 -1.55 V1.55"/></g></svg>
<span class="t " style="top:360px;font-size:10.05px;color:#383838;transform:translateX(65.17px) scaleX(1.0980);">USB 2.0: ulpi_tx_dat...</span>
<span class="t " style="top:377px;font-size:10.05px;color:#383838;transform:translateX(3.36px) scaleX(1.0420);">MIO 20</span>
<svg style="left:43.10px;top:378.86px" width="14" height="14" viewBox="-7 -7 14 14"><g transform="rotate(-42)" fill="none" stroke="#969a9d" stroke-width="0.95"><path d="M3.5 -1.55 H5.2 V1.55 H3.5 Z" fill="#dcdee0" stroke="none"/><path d="M5.2 -1.55 L-3.6 -1.55 A1.55 1.55 0 0 0 -3.6 1.55 L5.2 1.55 Z M3.5 -1.55 V1.55"/></g></svg>
<span class="t " style="top:377px;font-size:10.05px;color:#383838;transform:translateX(65.17px) scaleX(1.0980);">USB 2.0: ulpi_tx_dat...</span>
<span class="t " style="top:395px;font-size:10.05px;color:#383838;transform:translateX(3.36px) scaleX(1.0454);">MIO 21</span>
<svg style="left:43.10px;top:396.70px" width="14" height="14" viewBox="-7 -7 14 14"><g transform="rotate(-42)" fill="none" stroke="#969a9d" stroke-width="0.95"><path d="M3.5 -1.55 H5.2 V1.55 H3.5 Z" fill="#dcdee0" stroke="none"/><path d="M5.2 -1.55 L-3.6 -1.55 A1.55 1.55 0 0 0 -3.6 1.55 L5.2 1.55 Z M3.5 -1.55 V1.55"/></g></svg>
<span class="t " style="top:395px;font-size:10.05px;color:#383838;transform:translateX(65.17px) scaleX(1.0980);">USB 2.0: ulpi_tx_dat...</span>
<span class="t " style="top:413px;font-size:10.05px;color:#383838;transform:translateX(3.36px) scaleX(1.0454);">MIO 22</span>
<svg style="left:43.10px;top:414.55px" width="14" height="14" viewBox="-7 -7 14 14"><g transform="rotate(-42)" fill="none" stroke="#969a9d" stroke-width="0.95"><path d="M3.5 -1.55 H5.2 V1.55 H3.5 Z" fill="#dcdee0" stroke="none"/><path d="M5.2 -1.55 L-3.6 -1.55 A1.55 1.55 0 0 0 -3.6 1.55 L5.2 1.55 Z M3.5 -1.55 V1.55"/></g></svg>
<span class="t " style="top:413px;font-size:10.05px;color:#383838;transform:translateX(65.17px) scaleX(1.0980);">USB 2.0: ulpi_tx_dat...</span>
<span class="t " style="top:431px;font-size:10.05px;color:#383838;transform:translateX(3.36px) scaleX(1.0437);">MIO 23</span>
<svg style="left:43.10px;top:432.39px" width="14" height="14" viewBox="-7 -7 14 14"><g transform="rotate(-42)" fill="none" stroke="#969a9d" stroke-width="0.95"><path d="M3.5 -1.55 H5.2 V1.55 H3.5 Z" fill="#dcdee0" stroke="none"/><path d="M5.2 -1.55 L-3.6 -1.55 A1.55 1.55 0 0 0 -3.6 1.55 L5.2 1.55 Z M3.5 -1.55 V1.55"/></g></svg>
<span class="t " style="top:431px;font-size:10.05px;color:#383838;transform:translateX(65.18px) scaleX(1.0901);">USB 2.0: ulpi_dir</span>
<span class="t " style="top:449px;font-size:10.05px;color:#383838;transform:translateX(3.36px) scaleX(1.0388);">MIO 24</span>
<svg style="left:43.10px;top:450.23px" width="14" height="14" viewBox="-7 -7 14 14"><g transform="rotate(-42)" fill="none" stroke="#969a9d" stroke-width="0.95"><path d="M3.5 -1.55 H5.2 V1.55 H3.5 Z" fill="#dcdee0" stroke="none"/><path d="M5.2 -1.55 L-3.6 -1.55 A1.55 1.55 0 0 0 -3.6 1.55 L5.2 1.55 Z M3.5 -1.55 V1.55"/></g></svg>
<span class="t " style="top:449px;font-size:10.05px;color:#383838;transform:translateX(65.17px) scaleX(1.1007);">USB 2.0: ulpi_stp</span>
<span class="t " style="top:467px;font-size:10.05px;color:#383838;transform:translateX(3.36px) scaleX(1.0420);">MIO 25</span>
<svg style="left:43.10px;top:468.08px" width="14" height="14" viewBox="-7 -7 14 14"><g transform="rotate(-42)" fill="none" stroke="#969a9d" stroke-width="0.95"><path d="M3.5 -1.55 H5.2 V1.55 H3.5 Z" fill="#dcdee0" stroke="none"/><path d="M5.2 -1.55 L-3.6 -1.55 A1.55 1.55 0 0 0 -3.6 1.55 L5.2 1.55 Z M3.5 -1.55 V1.55"/></g></svg>
<span class="t " style="top:467px;font-size:10.05px;color:#383838;transform:translateX(65.17px) scaleX(1.1015);">USB 2.0: ulpi_nxt</span>
<span class="t " style="top:2px;font-size:10.05px;color:#1e1e1e;font-weight:bold;transform:translateX(248.85px) scaleX(1.1410);">PMC Bank 1</span>
<span class="t " style="top:20px;font-size:10.05px;color:#383838;transform:translateX(186.96px) scaleX(1.0437);">MIO 26</span>
<svg style="left:226.70px;top:22.00px" width="14" height="14" viewBox="-7 -7 14 14"><g transform="rotate(-42)" fill="none" stroke="#969a9d" stroke-width="0.95"><path d="M3.5 -1.55 H5.2 V1.55 H3.5 Z" fill="#dcdee0" stroke="none"/><path d="M5.2 -1.55 L-3.6 -1.55 A1.55 1.55 0 0 0 -3.6 1.55 L5.2 1.55 Z M3.5 -1.55 V1.55"/></g></svg>
<span class="t " style="top:20px;font-size:10.05px;color:#383838;transform:translateX(249.13px) scaleX(1.0489);">SD1/eMMC1: clk</span>
<span class="t " style="top:38px;font-size:10.05px;color:#383838;transform:translateX(186.96px) scaleX(1.0454);">MIO 27</span>
<svg style="left:226.70px;top:39.84px" width="14" height="14" viewBox="-7 -7 14 14"><g transform="rotate(-42)" fill="none" stroke="#969a9d" stroke-width="0.95"><path d="M3.5 -1.55 H5.2 V1.55 H3.5 Z" fill="#dcdee0" stroke="none"/><path d="M5.2 -1.55 L-3.6 -1.55 A1.55 1.55 0 0 0 -3.6 1.55 L5.2 1.55 Z M3.5 -1.55 V1.55"/></g></svg>
<span class="t " style="top:38px;font-size:10.05px;color:#383838;transform:translateX(249.11px) scaleX(1.0867);">SD1/eMMC1: dir1/d...</span>
<span class="t " style="top:56px;font-size:10.05px;color:#383838;transform:translateX(186.96px) scaleX(1.0420);">MIO 28</span>
<svg style="left:226.70px;top:57.69px" width="14" height="14" viewBox="-7 -7 14 14"><g transform="rotate(-42)" fill="none" stroke="#969a9d" stroke-width="0.95"><path d="M3.5 -1.55 H5.2 V1.55 H3.5 Z" fill="#dcdee0" stroke="none"/><path d="M5.2 -1.55 L-3.6 -1.55 A1.55 1.55 0 0 0 -3.6 1.55 L5.2 1.55 Z M3.5 -1.55 V1.55"/></g></svg>
<span class="t " style="top:56px;font-size:10.05px;color:#383838;transform:translateX(249.09px) scaleX(1.1276);">SD1: detect</span>
<span class="t " style="top:74px;font-size:10.05px;color:#383838;transform:translateX(186.96px) scaleX(1.0437);">MIO 29</span>
<svg style="left:226.70px;top:75.53px" width="14" height="14" viewBox="-7 -7 14 14"><g transform="rotate(-42)" fill="none" stroke="#969a9d" stroke-width="0.95"><path d="M3.5 -1.55 H5.2 V1.55 H3.5 Z" fill="#dcdee0" stroke="none"/><path d="M5.2 -1.55 L-3.6 -1.55 A1.55 1.55 0 0 0 -3.6 1.55 L5.2 1.55 Z M3.5 -1.55 V1.55"/></g></svg>
<span class="t " style="top:74px;font-size:10.05px;color:#383838;transform:translateX(249.12px) scaleX(1.0553);">SD1/eMMC1: cmd</span>
<span class="t " style="top:92px;font-size:10.05px;color:#383838;transform:translateX(186.96px) scaleX(1.0420);">MIO 30</span>
<svg style="left:226.70px;top:93.37px" width="14" height="14" viewBox="-7 -7 14 14"><g transform="rotate(-42)" fill="none" stroke="#969a9d" stroke-width="0.95"><path d="M3.5 -1.55 H5.2 V1.55 H3.5 Z" fill="#dcdee0" stroke="none"/><path d="M5.2 -1.55 L-3.6 -1.55 A1.55 1.55 0 0 0 -3.6 1.55 L5.2 1.55 Z M3.5 -1.55 V1.55"/></g></svg>
<span class="t " style="top:92px;font-size:10.05px;color:#383838;transform:translateX(249.10px) scaleX(1.1016);">SD1/eMMC1: data[0]</span>
<span class="t " style="top:110px;font-size:10.05px;color:#383838;transform:translateX(186.96px) scaleX(1.0454);">MIO 31</span>
<svg style="left:226.70px;top:111.22px" width="14" height="14" viewBox="-7 -7 14 14"><g transform="rotate(-42)" fill="none" stroke="#969a9d" stroke-width="0.95"><path d="M3.5 -1.55 H5.2 V1.55 H3.5 Z" fill="#dcdee0" stroke="none"/><path d="M5.2 -1.55 L-3.6 -1.55 A1.55 1.55 0 0 0 -3.6 1.55 L5.2 1.55 Z M3.5 -1.55 V1.55"/></g></svg>
<span class="t " style="top:110px;font-size:10.05px;color:#383838;transform:translateX(249.10px) scaleX(1.1016);">SD1/eMMC1: data[1]</span>
<span class="t " style="top:128px;font-size:10.05px;color:#383838;transform:translateX(186.96px) scaleX(1.0454);">MIO 32</span>
<svg style="left:226.70px;top:129.06px" width="14" height="14" viewBox="-7 -7 14 14"><g transform="rotate(-42)" fill="none" stroke="#969a9d" stroke-width="0.95"><path d="M3.5 -1.55 H5.2 V1.55 H3.5 Z" fill="#dcdee0" stroke="none"/><path d="M5.2 -1.55 L-3.6 -1.55 A1.55 1.55 0 0 0 -3.6 1.55 L5.2 1.55 Z M3.5 -1.55 V1.55"/></g></svg>
<span class="t " style="top:128px;font-size:10.05px;color:#383838;transform:translateX(249.10px) scaleX(1.1016);">SD1/eMMC1: data[2]</span>
<span class="t " style="top:145px;font-size:10.05px;color:#383838;transform:translateX(186.96px) scaleX(1.0437);">MIO 33</span>
<svg style="left:226.70px;top:146.90px" width="14" height="14" viewBox="-7 -7 14 14"><g transform="rotate(-42)" fill="none" stroke="#969a9d" stroke-width="0.95"><path d="M3.5 -1.55 H5.2 V1.55 H3.5 Z" fill="#dcdee0" stroke="none"/><path d="M5.2 -1.55 L-3.6 -1.55 A1.55 1.55 0 0 0 -3.6 1.55 L5.2 1.55 Z M3.5 -1.55 V1.55"/></g></svg>
<span class="t " style="top:145px;font-size:10.05px;color:#383838;transform:translateX(249.10px) scaleX(1.1016);">SD1/eMMC1: data[3]</span>
<span class="t " style="top:163px;font-size:10.05px;color:#383838;transform:translateX(186.96px) scaleX(1.0388);">MIO 34</span>
<svg style="left:226.70px;top:164.74px" width="14" height="14" viewBox="-7 -7 14 14"><g transform="rotate(-42)" fill="none" stroke="#969a9d" stroke-width="0.95"><path d="M3.5 -1.55 H5.2 V1.55 H3.5 Z" fill="#dcdee0" stroke="none"/><path d="M5.2 -1.55 L-3.6 -1.55 A1.55 1.55 0 0 0 -3.6 1.55 L5.2 1.55 Z M3.5 -1.55 V1.55"/></g></svg>
<span class="t " style="top:163px;font-size:10.05px;color:#383838;transform:translateX(249.11px) scaleX(1.0820);">SD1/eMMC1: sel/da...</span>
<span class="t " style="top:181px;font-size:10.05px;color:#383838;transform:translateX(186.96px) scaleX(1.0420);">MIO 35</span>
<svg style="left:226.70px;top:182.59px" width="14" height="14" viewBox="-7 -7 14 14"><g transform="rotate(-42)" fill="none" stroke="#969a9d" stroke-width="0.95"><path d="M3.5 -1.55 H5.2 V1.55 H3.5 Z" fill="#dcdee0" stroke="none"/><path d="M5.2 -1.55 L-3.6 -1.55 A1.55 1.55 0 0 0 -3.6 1.55 L5.2 1.55 Z M3.5 -1.55 V1.55"/></g></svg>
<span class="t " style="top:181px;font-size:10.05px;color:#383838;transform:translateX(249.12px) scaleX(1.0602);">SD1/eMMC1: dir_cm...</span>
<span class="t " style="top:199px;font-size:10.05px;color:#383838;transform:translateX(186.96px) scaleX(1.0437);">MIO 36</span>
<svg style="left:226.70px;top:200.43px" width="14" height="14" viewBox="-7 -7 14 14"><g transform="rotate(-42)" fill="none" stroke="#969a9d" stroke-width="0.95"><path d="M3.5 -1.55 H5.2 V1.55 H3.5 Z" fill="#dcdee0" stroke="none"/><path d="M5.2 -1.55 L-3.6 -1.55 A1.55 1.55 0 0 0 -3.6 1.55 L5.2 1.55 Z M3.5 -1.55 V1.55"/></g></svg>
<span class="t " style="top:199px;font-size:10.05px;color:#383838;transform:translateX(249.11px) scaleX(1.0867);">SD1/eMMC1: dir0/d...</span>
<span class="t " style="top:217px;font-size:10.05px;color:#383838;transform:translateX(186.96px) scaleX(1.0454);">MIO 37</span>
<svg style="left:226.70px;top:218.27px" width="14" height="14" viewBox="-7 -7 14 14"><g transform="rotate(-42)" fill="none" stroke="#969a9d" stroke-width="0.95"><path d="M3.5 -1.55 H5.2 V1.55 H3.5 Z" fill="#dcdee0" stroke="none"/><path d="M5.2 -1.55 L-3.6 -1.55 A1.55 1.55 0 0 0 -3.6 1.55 L5.2 1.55 Z M3.5 -1.55 V1.55"/></g></svg>
<span class="t " style="top:217px;font-size:10.05px;color:#383838;transform:translateX(249.06px) scaleX(1.0754);">GPIO 1: gpio_1_pin[...</span>
<span class="t " style="top:235px;font-size:10.05px;color:#383838;transform:translateX(186.96px) scaleX(1.0420);">MIO 38</span>
<svg style="left:226.70px;top:236.12px" width="14" height="14" viewBox="-7 -7 14 14"><g transform="rotate(-42)" fill="none" stroke="#969a9d" stroke-width="0.95"><path d="M3.5 -1.55 H5.2 V1.55 H3.5 Z" fill="#dcdee0" stroke="none"/><path d="M5.2 -1.55 L-3.6 -1.55 A1.55 1.55 0 0 0 -3.6 1.55 L5.2 1.55 Z M3.5 -1.55 V1.55"/></g></svg>
<span class="t " style="top:235px;font-size:10.05px;color:#383838;transform:translateX(249.06px) scaleX(1.0754);">GPIO 1: gpio_1_pin[...</span>
<span class="t " style="top:252px;font-size:10.05px;color:#383838;transform:translateX(186.96px) scaleX(1.0437);">MIO 39</span>
<svg style="left:226.70px;top:253.96px" width="14" height="14" viewBox="-7 -7 14 14"><g transform="rotate(-42)" fill="none" stroke="#969a9d" stroke-width="0.95"><path d="M3.5 -1.55 H5.2 V1.55 H3.5 Z" fill="#dcdee0" stroke="none"/><path d="M5.2 -1.55 L-3.6 -1.55 A1.55 1.55 0 0 0 -3.6 1.55 L5.2 1.55 Z M3.5 -1.55 V1.55"/></g></svg>
<span class="t " style="top:270px;font-size:10.05px;color:#383838;transform:translateX(186.96px) scaleX(1.0420);">MIO 40</span>
<svg style="left:226.70px;top:271.80px" width="14" height="14" viewBox="-7 -7 14 14"><g transform="rotate(-42)" fill="none" stroke="#969a9d" stroke-width="0.95"><path d="M3.5 -1.55 H5.2 V1.55 H3.5 Z" fill="#dcdee0" stroke="none"/><path d="M5.2 -1.55 L-3.6 -1.55 A1.55 1.55 0 0 0 -3.6 1.55 L5.2 1.55 Z M3.5 -1.55 V1.55"/></g></svg>
<span class="t " style="top:270px;font-size:10.05px;color:#383838;transform:translateX(248.74px) scaleX(1.0735);">PCIE: reset1_n</span>
<span class="t " style="top:288px;font-size:10.05px;color:#383838;transform:translateX(186.96px) scaleX(1.0454);">MIO 41</span>
<svg style="left:226.70px;top:289.64px" width="14" height="14" viewBox="-7 -7 14 14"><g transform="rotate(-42)" fill="none" stroke="#969a9d" stroke-width="0.95"><path d="M3.5 -1.55 H5.2 V1.55 H3.5 Z" fill="#dcdee0" stroke="none"/><path d="M5.2 -1.55 L-3.6 -1.55 A1.55 1.55 0 0 0 -3.6 1.55 L5.2 1.55 Z M3.5 -1.55 V1.55"/></g></svg>
<span class="t " style="top:306px;font-size:10.05px;color:#383838;transform:translateX(186.96px) scaleX(1.0454);">MIO 42</span>
<svg style="left:226.70px;top:307.49px" width="14" height="14" viewBox="-7 -7 14 14"><g transform="rotate(-42)" fill="none" stroke="#969a9d" stroke-width="0.95"><path d="M3.5 -1.55 H5.2 V1.55 H3.5 Z" fill="#dcdee0" stroke="none"/><path d="M5.2 -1.55 L-3.6 -1.55 A1.55 1.55 0 0 0 -3.6 1.55 L5.2 1.55 Z M3.5 -1.55 V1.55"/></g></svg>
<span class="t " style="top:306px;font-size:10.05px;color:#383838;transform:translateX(248.81px) scaleX(1.0537);">UART 0: rxd</span>
<span class="t " style="top:324px;font-size:10.05px;color:#383838;transform:translateX(186.96px) scaleX(1.0437);">MIO 43</span>
<svg style="left:226.70px;top:325.33px" width="14" height="14" viewBox="-7 -7 14 14"><g transform="rotate(-42)" fill="none" stroke="#969a9d" stroke-width="0.95"><path d="M3.5 -1.55 H5.2 V1.55 H3.5 Z" fill="#dcdee0" stroke="none"/><path d="M5.2 -1.55 L-3.6 -1.55 A1.55 1.55 0 0 0 -3.6 1.55 L5.2 1.55 Z M3.5 -1.55 V1.55"/></g></svg>
<span class="t " style="top:324px;font-size:10.05px;color:#383838;transform:translateX(248.80px) scaleX(1.0647);">UART 0: txd</span>
<span class="t " style="top:342px;font-size:10.05px;color:#383838;transform:translateX(186.96px) scaleX(1.0388);">MIO 44</span>
<svg style="left:226.70px;top:343.17px" width="14" height="14" viewBox="-7 -7 14 14"><g transform="rotate(-42)" fill="none" stroke="#969a9d" stroke-width="0.95"><path d="M3.5 -1.55 H5.2 V1.55 H3.5 Z" fill="#dcdee0" stroke="none"/><path d="M5.2 -1.55 L-3.6 -1.55 A1.55 1.55 0 0 0 -3.6 1.55 L5.2 1.55 Z M3.5 -1.55 V1.55"/></g></svg>
<span class="t " style="top:342px;font-size:10.05px;color:#383838;transform:translateX(248.77px) scaleX(1.0275);">LPD_I2C1: scl</span>
<span class="t " style="top:360px;font-size:10.05px;color:#383838;transform:translateX(186.96px) scaleX(1.0420);">MIO 45</span>
<svg style="left:226.70px;top:361.02px" width="14" height="14" viewBox="-7 -7 14 14"><g transform="rotate(-42)" fill="none" stroke="#969a9d" stroke-width="0.95"><path d="M3.5 -1.55 H5.2 V1.55 H3.5 Z" fill="#dcdee0" stroke="none"/><path d="M5.2 -1.55 L-3.6 -1.55 A1.55 1.55 0 0 0 -3.6 1.55 L5.2 1.55 Z M3.5 -1.55 V1.55"/></g></svg>
<span class="t " style="top:360px;font-size:10.05px;color:#383838;transform:translateX(248.77px) scaleX(1.0260);">LPD_I2C1: sda</span>
<span class="t " style="top:377px;font-size:10.05px;color:#383838;transform:translateX(186.96px) scaleX(1.0437);">MIO 46</span>
<svg style="left:226.70px;top:378.86px" width="14" height="14" viewBox="-7 -7 14 14"><g transform="rotate(-42)" fill="none" stroke="#969a9d" stroke-width="0.95"><path d="M3.5 -1.55 H5.2 V1.55 H3.5 Z" fill="#dcdee0" stroke="none"/><path d="M5.2 -1.55 L-3.6 -1.55 A1.55 1.55 0 0 0 -3.6 1.55 L5.2 1.55 Z M3.5 -1.55 V1.55"/></g></svg>
<span class="t " style="top:377px;font-size:10.05px;color:#383838;transform:translateX(248.77px) scaleX(1.0275);">LPD_I2C0: scl</span>
<span class="t " style="top:395px;font-size:10.05px;color:#383838;transform:translateX(186.96px) scaleX(1.0454);">MIO 47</span>
<svg style="left:226.70px;top:396.70px" width="14" height="14" viewBox="-7 -7 14 14"><g transform="rotate(-42)" fill="none" stroke="#969a9d" stroke-width="0.95"><path d="M3.5 -1.55 H5.2 V1.55 H3.5 Z" fill="#dcdee0" stroke="none"/><path d="M5.2 -1.55 L-3.6 -1.55 A1.55 1.55 0 0 0 -3.6 1.55 L5.2 1.55 Z M3.5 -1.55 V1.55"/></g></svg>
<span class="t " style="top:395px;font-size:10.05px;color:#383838;transform:translateX(248.77px) scaleX(1.0260);">LPD_I2C0: sda</span>
<span class="t " style="top:413px;font-size:10.05px;color:#383838;transform:translateX(186.96px) scaleX(1.0420);">MIO 48</span>
<svg style="left:226.70px;top:414.55px" width="14" height="14" viewBox="-7 -7 14 14"><g transform="rotate(-42)" fill="none" stroke="#969a9d" stroke-width="0.95"><path d="M3.5 -1.55 H5.2 V1.55 H3.5 Z" fill="#dcdee0" stroke="none"/><path d="M5.2 -1.55 L-3.6 -1.55 A1.55 1.55 0 0 0 -3.6 1.55 L5.2 1.55 Z M3.5 -1.55 V1.55"/></g></svg>
<span class="t " style="top:431px;font-size:10.05px;color:#383838;transform:translateX(186.96px) scaleX(1.0437);">MIO 49</span>
<svg style="left:226.70px;top:432.39px" width="14" height="14" viewBox="-7 -7 14 14"><g transform="rotate(-42)" fill="none" stroke="#969a9d" stroke-width="0.95"><path d="M3.5 -1.55 H5.2 V1.55 H3.5 Z" fill="#dcdee0" stroke="none"/><path d="M5.2 -1.55 L-3.6 -1.55 A1.55 1.55 0 0 0 -3.6 1.55 L5.2 1.55 Z M3.5 -1.55 V1.55"/></g></svg>
<span class="t " style="top:449px;font-size:10.05px;color:#383838;transform:translateX(186.96px) scaleX(1.0420);">MIO 50</span>
<svg style="left:226.70px;top:450.23px" width="14" height="14" viewBox="-7 -7 14 14"><g transform="rotate(-42)" fill="none" stroke="#969a9d" stroke-width="0.95"><path d="M3.5 -1.55 H5.2 V1.55 H3.5 Z" fill="#dcdee0" stroke="none"/><path d="M5.2 -1.55 L-3.6 -1.55 A1.55 1.55 0 0 0 -3.6 1.55 L5.2 1.55 Z M3.5 -1.55 V1.55"/></g></svg>
<span class="t " style="top:467px;font-size:10.05px;color:#383838;transform:translateX(186.96px) scaleX(1.0454);">MIO 51</span>
<svg style="left:226.70px;top:468.08px" width="14" height="14" viewBox="-7 -7 14 14"><g transform="rotate(-42)" fill="none" stroke="#969a9d" stroke-width="0.95"><path d="M3.5 -1.55 H5.2 V1.55 H3.5 Z" fill="#dcdee0" stroke="none"/><path d="M5.2 -1.55 L-3.6 -1.55 A1.55 1.55 0 0 0 -3.6 1.55 L5.2 1.55 Z M3.5 -1.55 V1.55"/></g></svg>
<span class="t " style="top:467px;font-size:10.05px;color:#383838;transform:translateX(249.11px) scaleX(1.0869);">SD1/eMMC1: buspw...</span>
<span class="t " style="top:2px;font-size:10.05px;color:#1e1e1e;font-weight:bold;transform:translateX(432.45px) scaleX(1.1446);">PS Bank 2</span>
<span class="t " style="top:20px;font-size:10.05px;color:#383838;transform:translateX(370.57px) scaleX(1.0293);">MIO 0</span>
<svg style="left:410.30px;top:22.00px" width="14" height="14" viewBox="-7 -7 14 14"><g transform="rotate(-42)" fill="none" stroke="#969a9d" stroke-width="0.95"><path d="M3.5 -1.55 H5.2 V1.55 H3.5 Z" fill="#dcdee0" stroke="none"/><path d="M5.2 -1.55 L-3.6 -1.55 A1.55 1.55 0 0 0 -3.6 1.55 L5.2 1.55 Z M3.5 -1.55 V1.55"/></g></svg>
<span class="t " style="top:20px;font-size:10.05px;color:#383838;transform:translateX(432.63px) scaleX(1.1281);">Gem0: rgmii_tx_clk</span>
<span class="t " style="top:38px;font-size:10.05px;color:#383838;transform:translateX(370.57px) scaleX(1.0332);">MIO 1</span>
<svg style="left:410.30px;top:39.84px" width="14" height="14" viewBox="-7 -7 14 14"><g transform="rotate(-42)" fill="none" stroke="#969a9d" stroke-width="0.95"><path d="M3.5 -1.55 H5.2 V1.55 H3.5 Z" fill="#dcdee0" stroke="none"/><path d="M5.2 -1.55 L-3.6 -1.55 A1.55 1.55 0 0 0 -3.6 1.55 L5.2 1.55 Z M3.5 -1.55 V1.55"/></g></svg>
<span class="t " style="top:38px;font-size:10.05px;color:#383838;transform:translateX(432.63px) scaleX(1.1281);">Gem0: rgmii_tx_clk</span>
<span class="t " style="top:56px;font-size:10.05px;color:#383838;transform:translateX(370.57px) scaleX(1.0332);">MIO 2</span>
<svg style="left:410.30px;top:57.69px" width="14" height="14" viewBox="-7 -7 14 14"><g transform="rotate(-42)" fill="none" stroke="#969a9d" stroke-width="0.95"><path d="M3.5 -1.55 H5.2 V1.55 H3.5 Z" fill="#dcdee0" stroke="none"/><path d="M5.2 -1.55 L-3.6 -1.55 A1.55 1.55 0 0 0 -3.6 1.55 L5.2 1.55 Z M3.5 -1.55 V1.55"/></g></svg>
<span class="t " style="top:56px;font-size:10.05px;color:#383838;transform:translateX(432.63px) scaleX(1.1281);">Gem0: rgmii_tx_clk</span>
<span class="t " style="top:74px;font-size:10.05px;color:#383838;transform:translateX(370.57px) scaleX(1.0312);">MIO 3</span>
<svg style="left:410.30px;top:75.53px" width="14" height="14" viewBox="-7 -7 14 14"><g transform="rotate(-42)" fill="none" stroke="#969a9d" stroke-width="0.95"><path d="M3.5 -1.55 H5.2 V1.55 H3.5 Z" fill="#dcdee0" stroke="none"/><path d="M5.2 -1.55 L-3.6 -1.55 A1.55 1.55 0 0 0 -3.6 1.55 L5.2 1.55 Z M3.5 -1.55 V1.55"/></g></svg>
<span class="t " style="top:74px;font-size:10.05px;color:#383838;transform:translateX(432.63px) scaleX(1.1281);">Gem0: rgmii_tx_clk</span>
<span class="t " style="top:92px;font-size:10.05px;color:#383838;transform:translateX(370.58px) scaleX(1.0253);">MIO 4</span>
<svg style="left:410.30px;top:93.37px" width="14" height="14" viewBox="-7 -7 14 14"><g transform="rotate(-42)" fill="none" stroke="#969a9d" stroke-width="0.95"><path d="M3.5 -1.55 H5.2 V1.55 H3.5 Z" fill="#dcdee0" stroke="none"/><path d="M5.2 -1.55 L-3.6 -1.55 A1.55 1.55 0 0 0 -3.6 1.55 L5.2 1.55 Z M3.5 -1.55 V1.55"/></g></svg>
<span class="t " style="top:92px;font-size:10.05px;color:#383838;transform:translateX(432.63px) scaleX(1.1281);">Gem0: rgmii_tx_clk</span>
<span class="t " style="top:110px;font-size:10.05px;color:#383838;transform:translateX(370.57px) scaleX(1.0293);">MIO 5</span>
<svg style="left:410.30px;top:111.22px" width="14" height="14" viewBox="-7 -7 14 14"><g transform="rotate(-42)" fill="none" stroke="#969a9d" stroke-width="0.95"><path d="M3.5 -1.55 H5.2 V1.55 H3.5 Z" fill="#dcdee0" stroke="none"/><path d="M5.2 -1.55 L-3.6 -1.55 A1.55 1.55 0 0 0 -3.6 1.55 L5.2 1.55 Z M3.5 -1.55 V1.55"/></g></svg>
<span class="t " style="top:110px;font-size:10.05px;color:#383838;transform:translateX(432.63px) scaleX(1.1281);">Gem0: rgmii_tx_clk</span>
<span class="t " style="top:128px;font-size:10.05px;color:#383838;transform:translateX(370.57px) scaleX(1.0312);">MIO 6</span>
<svg style="left:410.30px;top:129.06px" width="14" height="14" viewBox="-7 -7 14 14"><g transform="rotate(-42)" fill="none" stroke="#969a9d" stroke-width="0.95"><path d="M3.5 -1.55 H5.2 V1.55 H3.5 Z" fill="#dcdee0" stroke="none"/><path d="M5.2 -1.55 L-3.6 -1.55 A1.55 1.55 0 0 0 -3.6 1.55 L5.2 1.55 Z M3.5 -1.55 V1.55"/></g></svg>
<span class="t " style="top:128px;font-size:10.05px;color:#383838;transform:translateX(432.63px) scaleX(1.1281);">Gem0: rgmii_tx_clk</span>
<span class="t " style="top:145px;font-size:10.05px;color:#383838;transform:translateX(370.57px) scaleX(1.0332);">MIO 7</span>
<svg style="left:410.30px;top:146.90px" width="14" height="14" viewBox="-7 -7 14 14"><g transform="rotate(-42)" fill="none" stroke="#969a9d" stroke-width="0.95"><path d="M3.5 -1.55 H5.2 V1.55 H3.5 Z" fill="#dcdee0" stroke="none"/><path d="M5.2 -1.55 L-3.6 -1.55 A1.55 1.55 0 0 0 -3.6 1.55 L5.2 1.55 Z M3.5 -1.55 V1.55"/></g></svg>
<span class="t " style="top:145px;font-size:10.05px;color:#383838;transform:translateX(432.63px) scaleX(1.1281);">Gem0: rgmii_tx_clk</span>
<span class="t " style="top:163px;font-size:10.05px;color:#383838;transform:translateX(370.57px) scaleX(1.0293);">MIO 8</span>
<svg style="left:410.30px;top:164.74px" width="14" height="14" viewBox="-7 -7 14 14"><g transform="rotate(-42)" fill="none" stroke="#969a9d" stroke-width="0.95"><path d="M3.5 -1.55 H5.2 V1.55 H3.5 Z" fill="#dcdee0" stroke="none"/><path d="M5.2 -1.55 L-3.6 -1.55 A1.55 1.55 0 0 0 -3.6 1.55 L5.2 1.55 Z M3.5 -1.55 V1.55"/></g></svg>
<span class="t " style="top:163px;font-size:10.05px;color:#383838;transform:translateX(432.63px) scaleX(1.1281);">Gem0: rgmii_tx_clk</span>
<span class="t " style="top:181px;font-size:10.05px;color:#383838;transform:translateX(370.57px) scaleX(1.0312);">MIO 9</span>
<svg style="left:410.30px;top:182.59px" width="14" height="14" viewBox="-7 -7 14 14"><g transform="rotate(-42)" fill="none" stroke="#969a9d" stroke-width="0.95"><path d="M3.5 -1.55 H5.2 V1.55 H3.5 Z" fill="#dcdee0" stroke="none"/><path d="M5.2 -1.55 L-3.6 -1.55 A1.55 1.55 0 0 0 -3.6 1.55 L5.2 1.55 Z M3.5 -1.55 V1.55"/></g></svg>
<span class="t " style="top:181px;font-size:10.05px;color:#383838;transform:translateX(432.63px) scaleX(1.1281);">Gem0: rgmii_tx_clk</span>
<span class="t " style="top:199px;font-size:10.05px;color:#383838;transform:translateX(370.56px) scaleX(1.0420);">MIO 10</span>
<svg style="left:410.30px;top:200.43px" width="14" height="14" viewBox="-7 -7 14 14"><g transform="rotate(-42)" fill="none" stroke="#969a9d" stroke-width="0.95"><path d="M3.5 -1.55 H5.2 V1.55 H3.5 Z" fill="#dcdee0" stroke="none"/><path d="M5.2 -1.55 L-3.6 -1.55 A1.55 1.55 0 0 0 -3.6 1.55 L5.2 1.55 Z M3.5 -1.55 V1.55"/></g></svg>
<span class="t " style="top:199px;font-size:10.05px;color:#383838;transform:translateX(432.63px) scaleX(1.1281);">Gem0: rgmii_tx_clk</span>
<span class="t " style="top:217px;font-size:10.05px;color:#383838;transform:translateX(370.54px) scaleX(1.0709);">MIO 11</span>
<svg style="left:410.30px;top:218.27px" width="14" height="14" viewBox="-7 -7 14 14"><g transform="rotate(-42)" fill="none" stroke="#969a9d" stroke-width="0.95"><path d="M3.5 -1.55 H5.2 V1.55 H3.5 Z" fill="#dcdee0" stroke="none"/><path d="M5.2 -1.55 L-3.6 -1.55 A1.55 1.55 0 0 0 -3.6 1.55 L5.2 1.55 Z M3.5 -1.55 V1.55"/></g></svg>
<span class="t " style="top:217px;font-size:10.05px;color:#383838;transform:translateX(432.63px) scaleX(1.1281);">Gem0: rgmii_tx_clk</span>
<span class="t " style="top:235px;font-size:10.05px;color:#383838;transform:translateX(370.56px) scaleX(1.0454);">MIO 12</span>
<svg style="left:410.30px;top:236.12px" width="14" height="14" viewBox="-7 -7 14 14"><g transform="rotate(-42)" fill="none" stroke="#969a9d" stroke-width="0.95"><path d="M3.5 -1.55 H5.2 V1.55 H3.5 Z" fill="#dcdee0" stroke="none"/><path d="M5.2 -1.55 L-3.6 -1.55 A1.55 1.55 0 0 0 -3.6 1.55 L5.2 1.55 Z M3.5 -1.55 V1.55"/></g></svg>
<span class="t " style="top:252px;font-size:10.05px;color:#383838;transform:translateX(370.56px) scaleX(1.0437);">MIO 13</span>
<svg style="left:410.30px;top:253.96px" width="14" height="14" viewBox="-7 -7 14 14"><g transform="rotate(-42)" fill="none" stroke="#969a9d" stroke-width="0.95"><path d="M3.5 -1.55 H5.2 V1.55 H3.5 Z" fill="#dcdee0" stroke="none"/><path d="M5.2 -1.55 L-3.6 -1.55 A1.55 1.55 0 0 0 -3.6 1.55 L5.2 1.55 Z M3.5 -1.55 V1.55"/></g></svg>
<span class="t " style="top:270px;font-size:10.05px;color:#383838;transform:translateX(370.56px) scaleX(1.0388);">MIO 14</span>
<svg style="left:410.30px;top:271.80px" width="14" height="14" viewBox="-7 -7 14 14"><g transform="rotate(-42)" fill="none" stroke="#969a9d" stroke-width="0.95"><path d="M3.5 -1.55 H5.2 V1.55 H3.5 Z" fill="#dcdee0" stroke="none"/><path d="M5.2 -1.55 L-3.6 -1.55 A1.55 1.55 0 0 0 -3.6 1.55 L5.2 1.55 Z M3.5 -1.55 V1.55"/></g></svg>
<span class="t " style="top:288px;font-size:10.05px;color:#383838;transform:translateX(370.56px) scaleX(1.0420);">MIO 15</span>
<svg style="left:410.30px;top:289.64px" width="14" height="14" viewBox="-7 -7 14 14"><g transform="rotate(-42)" fill="none" stroke="#969a9d" stroke-width="0.95"><path d="M3.5 -1.55 H5.2 V1.55 H3.5 Z" fill="#dcdee0" stroke="none"/><path d="M5.2 -1.55 L-3.6 -1.55 A1.55 1.55 0 0 0 -3.6 1.55 L5.2 1.55 Z M3.5 -1.55 V1.55"/></g></svg>
<span class="t " style="top:306px;font-size:10.05px;color:#383838;transform:translateX(370.56px) scaleX(1.0437);">MIO 16</span>
<svg style="left:410.30px;top:307.49px" width="14" height="14" viewBox="-7 -7 14 14"><g transform="rotate(-42)" fill="none" stroke="#969a9d" stroke-width="0.95"><path d="M3.5 -1.55 H5.2 V1.55 H3.5 Z" fill="#dcdee0" stroke="none"/><path d="M5.2 -1.55 L-3.6 -1.55 A1.55 1.55 0 0 0 -3.6 1.55 L5.2 1.55 Z M3.5 -1.55 V1.55"/></g></svg>
<span class="t " style="top:324px;font-size:10.05px;color:#383838;transform:translateX(370.56px) scaleX(1.0454);">MIO 17</span>
<svg style="left:410.30px;top:325.33px" width="14" height="14" viewBox="-7 -7 14 14"><g transform="rotate(-42)" fill="none" stroke="#969a9d" stroke-width="0.95"><path d="M3.5 -1.55 H5.2 V1.55 H3.5 Z" fill="#dcdee0" stroke="none"/><path d="M5.2 -1.55 L-3.6 -1.55 A1.55 1.55 0 0 0 -3.6 1.55 L5.2 1.55 Z M3.5 -1.55 V1.55"/></g></svg>
<span class="t " style="top:342px;font-size:10.05px;color:#383838;transform:translateX(370.56px) scaleX(1.0420);">MIO 18</span>
<svg style="left:410.30px;top:343.17px" width="14" height="14" viewBox="-7 -7 14 14"><g transform="rotate(-42)" fill="none" stroke="#969a9d" stroke-width="0.95"><path d="M3.5 -1.55 H5.2 V1.55 H3.5 Z" fill="#dcdee0" stroke="none"/><path d="M5.2 -1.55 L-3.6 -1.55 A1.55 1.55 0 0 0 -3.6 1.55 L5.2 1.55 Z M3.5 -1.55 V1.55"/></g></svg>
<span class="t " style="top:360px;font-size:10.05px;color:#383838;transform:translateX(370.56px) scaleX(1.0437);">MIO 19</span>
<svg style="left:410.30px;top:361.02px" width="14" height="14" viewBox="-7 -7 14 14"><g transform="rotate(-42)" fill="none" stroke="#969a9d" stroke-width="0.95"><path d="M3.5 -1.55 H5.2 V1.55 H3.5 Z" fill="#dcdee0" stroke="none"/><path d="M5.2 -1.55 L-3.6 -1.55 A1.55 1.55 0 0 0 -3.6 1.55 L5.2 1.55 Z M3.5 -1.55 V1.55"/></g></svg>
<span class="t " style="top:377px;font-size:10.05px;color:#383838;transform:translateX(370.56px) scaleX(1.0420);">MIO 20</span>
<svg style="left:410.30px;top:378.86px" width="14" height="14" viewBox="-7 -7 14 14"><g transform="rotate(-42)" fill="none" stroke="#969a9d" stroke-width="0.95"><path d="M3.5 -1.55 H5.2 V1.55 H3.5 Z" fill="#dcdee0" stroke="none"/><path d="M5.2 -1.55 L-3.6 -1.55 A1.55 1.55 0 0 0 -3.6 1.55 L5.2 1.55 Z M3.5 -1.55 V1.55"/></g></svg>
<span class="t " style="top:395px;font-size:10.05px;color:#383838;transform:translateX(370.56px) scaleX(1.0454);">MIO 21</span>
<svg style="left:410.30px;top:396.70px" width="14" height="14" viewBox="-7 -7 14 14"><g transform="rotate(-42)" fill="none" stroke="#969a9d" stroke-width="0.95"><path d="M3.5 -1.55 H5.2 V1.55 H3.5 Z" fill="#dcdee0" stroke="none"/><path d="M5.2 -1.55 L-3.6 -1.55 A1.55 1.55 0 0 0 -3.6 1.55 L5.2 1.55 Z M3.5 -1.55 V1.55"/></g></svg>
<span class="t " style="top:413px;font-size:10.05px;color:#383838;transform:translateX(370.56px) scaleX(1.0454);">MIO 22</span>
<svg style="left:410.30px;top:414.55px" width="14" height="14" viewBox="-7 -7 14 14"><g transform="rotate(-42)" fill="none" stroke="#969a9d" stroke-width="0.95"><path d="M3.5 -1.55 H5.2 V1.55 H3.5 Z" fill="#dcdee0" stroke="none"/><path d="M5.2 -1.55 L-3.6 -1.55 A1.55 1.55 0 0 0 -3.6 1.55 L5.2 1.55 Z M3.5 -1.55 V1.55"/></g></svg>
<span class="t " style="top:431px;font-size:10.05px;color:#383838;transform:translateX(370.56px) scaleX(1.0437);">MIO 23</span>
<svg style="left:410.30px;top:432.39px" width="14" height="14" viewBox="-7 -7 14 14"><g transform="rotate(-42)" fill="none" stroke="#969a9d" stroke-width="0.95"><path d="M3.5 -1.55 H5.2 V1.55 H3.5 Z" fill="#dcdee0" stroke="none"/><path d="M5.2 -1.55 L-3.6 -1.55 A1.55 1.55 0 0 0 -3.6 1.55 L5.2 1.55 Z M3.5 -1.55 V1.55"/></g></svg>
<span class="t " style="top:449px;font-size:10.05px;color:#383838;transform:translateX(370.56px) scaleX(1.0388);">MIO 24</span>
<svg style="left:410.30px;top:450.23px" width="14" height="14" viewBox="-7 -7 14 14"><g transform="rotate(-42)" fill="none" stroke="#969a9d" stroke-width="0.95"><path d="M3.5 -1.55 H5.2 V1.55 H3.5 Z" fill="#dcdee0" stroke="none"/><path d="M5.2 -1.55 L-3.6 -1.55 A1.55 1.55 0 0 0 -3.6 1.55 L5.2 1.55 Z M3.5 -1.55 V1.55"/></g></svg>
<span class="t " style="top:449px;font-size:10.05px;color:#383838;transform:translateX(432.64px) scaleX(1.1229);">Gem0: gem0_mdc</span>
<span class="t " style="top:467px;font-size:10.05px;color:#383838;transform:translateX(370.56px) scaleX(1.0420);">MIO 25</span>
<svg style="left:410.30px;top:468.08px" width="14" height="14" viewBox="-7 -7 14 14"><g transform="rotate(-42)" fill="none" stroke="#969a9d" stroke-width="0.95"><path d="M3.5 -1.55 H5.2 V1.55 H3.5 Z" fill="#dcdee0" stroke="none"/><path d="M5.2 -1.55 L-3.6 -1.55 A1.55 1.55 0 0 0 -3.6 1.55 L5.2 1.55 Z M3.5 -1.55 V1.55"/></g></svg>
<span class="t " style="top:467px;font-size:10.05px;color:#383838;transform:translateX(432.63px) scaleX(1.1295);">Gem0: gem0_mdio</span>
</div>
<div style="left:938.30px;top:125.00px;width:10.90px;height:479.70px;background:#f8f8f8;"></div>
<svg style="left:940.30px;top:128.00px" width="9" height="7" viewBox="0 0 9 7"><path d="M0.5 5.2 L4.3 1.4 L8.1 5.2" fill="none" stroke="#4c4c4c" stroke-width="1.35"/></svg>
<svg style="left:940.30px;top:596.20px" width="9" height="7" viewBox="0 0 9 7"><path d="M0.5 1.2 L4.3 5.2 L8.1 1.2" fill="none" stroke="#4c4c4c" stroke-width="1.35"/></svg>
<div style="left:941.00px;top:139.60px;width:5.70px;height:439.00px;background:#c1c1c1;border-radius:2.8px;"></div>
<div style="left:153.30px;top:604.30px;width:795.90px;height:11.30px;background:#f6f6f6;"></div>
<svg style="left:156.60px;top:606.80px" width="6" height="9" viewBox="0 0 6 9"><path d="M4.8 0.9 L1.4 4.3 L4.8 7.7" fill="none" stroke="#4c4c4c" stroke-width="1.35"/></svg>
<svg style="left:929.60px;top:606.60px" width="7" height="10" viewBox="0 0 7 10"><path d="M1.3 1.0 L5.4 4.5 L1.3 8.0" fill="none" stroke="#4c4c4c" stroke-width="1.35"/></svg>
<div style="left:167.20px;top:607.20px;width:629.00px;height:5.60px;background:#c1c1c1;border-radius:2.8px;"></div>
<div style="left:938.30px;top:604.70px;width:10.90px;height:10.90px;background:#e3e3e3;"></div>
<div style="left:440.90px;top:124.90px;width:2.40px;height:479.80px;background:#e6e6e6;"></div>
<div style="left:443.30px;top:124.90px;width:495.00px;height:2.70px;background:#ebebeb;"></div>
<div style="left:12.30px;top:616.00px;width:941.60px;height:4.60px;background:#e4e4e4;"></div>
<div style="left:949.20px;top:123.00px;width:4.70px;height:497.60px;background:#e6e6e6;"></div>
<div style="left:951.70px;top:94.40px;width:2.20px;height:526.20px;background:#e2e2e2;"></div>
<div style="left:12.30px;top:94.20px;width:941.60px;height:1.90px;background:#dedede;"></div>
<div style="left:12.30px;top:96.10px;width:2.10px;height:524.50px;background:#e6e6e6;"></div>
<div style="left:14.40px;top:123.00px;width:2.60px;height:493.00px;background:#e6e6e6;"></div>
<div style="left:12.2px;top:625.6px;width:17.6px;height:17.6px;border-radius:50%;background:#fff;border:1px solid #9a9a9a;box-sizing:border-box;"></div>
<span class="t " style="top:625px;font-size:10.77px;color:#2c4a8c;font-weight:bold;transform:translateX(17.97px) scaleX(0.8921);">?</span>
<div style="left:808.80px;top:625.50px;width:61.00px;height:20.40px;background:#4a7acf;"></div>
<span class="t " style="top:627px;font-size:10.05px;color:#dfe8f8;transform:translateX(832.55px) scaleX(1.0056);">OK</span>
<div style="left:890.0px;top:625.5px;width:61.0px;height:20.4px;background:#fff;border:1px solid #6f6f6f;box-sizing:border-box;"></div>
<span class="t " style="top:627px;font-size:10.05px;color:#383838;transform:translateX(903.45px) scaleX(1.1005);">Cancel</span>
</div></body></html>
